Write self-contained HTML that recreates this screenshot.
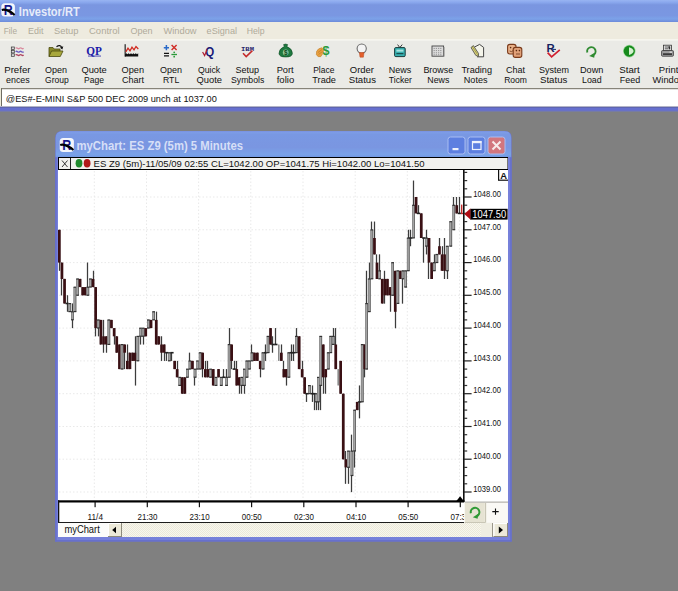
<!DOCTYPE html>
<html><head><meta charset="utf-8">
<style>
html,body{margin:0;padding:0;background:#808080;}
body{width:678px;height:591px;overflow:hidden;position:relative;font-family:"Liberation Sans",sans-serif;}
svg{position:absolute;left:0;top:0;display:block;font-family:"Liberation Sans",sans-serif;}
text{white-space:pre;}
</style></head><body>
<svg width="678" height="591" viewBox="0 0 678 591">
<defs>
<linearGradient id="tg" x1="0" y1="0" x2="0" y2="1">
<stop offset="0" stop-color="#98b4f2"/><stop offset="0.12" stop-color="#88a6ec"/><stop offset="0.22" stop-color="#7a96e0"/><stop offset="0.7" stop-color="#7a97e2"/><stop offset="0.86" stop-color="#7ca2e8"/><stop offset="1" stop-color="#6d8ada"/>
</linearGradient>
<linearGradient id="wg" x1="0" y1="0" x2="0" y2="1">
<stop offset="0" stop-color="#7f9ee8"/><stop offset="0.12" stop-color="#7998e3"/><stop offset="0.6" stop-color="#7a96e1"/><stop offset="0.86" stop-color="#7aa2e8"/><stop offset="1" stop-color="#7096e0"/>
</linearGradient>
<pattern id="trk" width="2" height="2" patternUnits="userSpaceOnUse"><rect width="2" height="2" fill="#f7f6ef"/><rect width="1" height="1" fill="#ece9d8"/><rect x="1" y="1" width="1" height="1" fill="#ece9d8"/></pattern>
<clipPath id="cpx"><rect x="58" y="502" width="406.5" height="21"/></clipPath>
</defs>
<rect width="678" height="591" fill="#808080"/>

<rect x="0" y="0" width="678" height="22" fill="url(#tg)"/>
<g id="appicon"><rect x="1.3" y="3.2" width="13.6" height="13.4" rx="3.5" fill="#f4f6fb"/><text x="3.8" y="14.6" font-size="14" font-weight="bold" fill="#16168c" textLength="9" lengthAdjust="spacingAndGlyphs">R</text><path d="M1.8 10 Q4.4 9.2 7.6 10.6 Q10.6 11.2 14.6 15" stroke="#000" stroke-width="2.2" fill="none"/></g>
<text x="18.8" y="15.6" font-size="12" fill="#e6ecfa" font-weight="bold" text-anchor="start" textLength="61.0" lengthAdjust="spacingAndGlyphs" >Investor/RT</text>
<rect x="0" y="22" width="678" height="18" fill="#eeebdf"/>
<text x="3.7" y="33.9" font-size="9.2" fill="#aeaa9a" font-weight="normal" text-anchor="start" textLength="13.3" lengthAdjust="spacingAndGlyphs" >File</text>
<text x="28.0" y="33.9" font-size="9.2" fill="#aeaa9a" font-weight="normal" text-anchor="start" textLength="15.4" lengthAdjust="spacingAndGlyphs" >Edit</text>
<text x="54.0" y="33.9" font-size="9.2" fill="#aeaa9a" font-weight="normal" text-anchor="start" textLength="24.5" lengthAdjust="spacingAndGlyphs" >Setup</text>
<text x="89.0" y="33.9" font-size="9.2" fill="#aeaa9a" font-weight="normal" text-anchor="start" textLength="30.6" lengthAdjust="spacingAndGlyphs" >Control</text>
<text x="130.4" y="33.9" font-size="9.2" fill="#aeaa9a" font-weight="normal" text-anchor="start" textLength="22.1" lengthAdjust="spacingAndGlyphs" >Open</text>
<text x="163.5" y="33.9" font-size="9.2" fill="#aeaa9a" font-weight="normal" text-anchor="start" textLength="33.1" lengthAdjust="spacingAndGlyphs" >Window</text>
<text x="206.6" y="33.9" font-size="9.2" fill="#aeaa9a" font-weight="normal" text-anchor="start" textLength="30.4" lengthAdjust="spacingAndGlyphs" >eSignal</text>
<text x="246.7" y="33.9" font-size="9.2" fill="#aeaa9a" font-weight="normal" text-anchor="start" textLength="17.8" lengthAdjust="spacingAndGlyphs" >Help</text>
<rect x="0" y="40" width="678" height="49" fill="#eaeae6"/>
<rect x="0" y="39.3" width="678" height="1.2" fill="#faf9f4"/>
<text x="4.2" y="72.6" font-size="9.3" fill="#111" font-weight="normal" text-anchor="start" textLength="26.3" lengthAdjust="spacingAndGlyphs" >Prefer</text>
<text x="6.0" y="83.0" font-size="9.3" fill="#111" font-weight="normal" text-anchor="start" textLength="23.7" lengthAdjust="spacingAndGlyphs" >ences</text>
<text x="45.0" y="72.6" font-size="9.3" fill="#111" font-weight="normal" text-anchor="start" textLength="22.0" lengthAdjust="spacingAndGlyphs" >Open</text>
<text x="45.0" y="83.0" font-size="9.3" fill="#111" font-weight="normal" text-anchor="start" textLength="23.7" lengthAdjust="spacingAndGlyphs" >Group</text>
<text x="81.4" y="72.6" font-size="9.3" fill="#111" font-weight="normal" text-anchor="start" textLength="25.4" lengthAdjust="spacingAndGlyphs" >Quote</text>
<text x="84.0" y="83.0" font-size="9.3" fill="#111" font-weight="normal" text-anchor="start" textLength="20.0" lengthAdjust="spacingAndGlyphs" >Page</text>
<text x="121.5" y="72.6" font-size="9.3" fill="#111" font-weight="normal" text-anchor="start" textLength="22.5" lengthAdjust="spacingAndGlyphs" >Open</text>
<text x="121.9" y="83.0" font-size="9.3" fill="#111" font-weight="normal" text-anchor="start" textLength="22.1" lengthAdjust="spacingAndGlyphs" >Chart</text>
<text x="160.0" y="72.6" font-size="9.3" fill="#111" font-weight="normal" text-anchor="start" textLength="22.0" lengthAdjust="spacingAndGlyphs" >Open</text>
<text x="163.0" y="83.0" font-size="9.3" fill="#111" font-weight="normal" text-anchor="start" textLength="16.2" lengthAdjust="spacingAndGlyphs" >RTL</text>
<text x="197.9" y="72.6" font-size="9.3" fill="#111" font-weight="normal" text-anchor="start" textLength="22.3" lengthAdjust="spacingAndGlyphs" >Quick</text>
<text x="196.5" y="83.0" font-size="9.3" fill="#111" font-weight="normal" text-anchor="start" textLength="25.5" lengthAdjust="spacingAndGlyphs" >Quote</text>
<text x="235.5" y="72.6" font-size="9.3" fill="#111" font-weight="normal" text-anchor="start" textLength="23.5" lengthAdjust="spacingAndGlyphs" >Setup</text>
<text x="231.0" y="83.0" font-size="9.3" fill="#111" font-weight="normal" text-anchor="start" textLength="33.3" lengthAdjust="spacingAndGlyphs" >Symbols</text>
<text x="276.7" y="72.6" font-size="9.3" fill="#111" font-weight="normal" text-anchor="start" textLength="17.0" lengthAdjust="spacingAndGlyphs" >Port</text>
<text x="276.7" y="83.0" font-size="9.3" fill="#111" font-weight="normal" text-anchor="start" textLength="17.5" lengthAdjust="spacingAndGlyphs" >folio</text>
<text x="313.2" y="72.6" font-size="9.3" fill="#111" font-weight="normal" text-anchor="start" textLength="21.2" lengthAdjust="spacingAndGlyphs" >Place</text>
<text x="312.3" y="83.0" font-size="9.3" fill="#111" font-weight="normal" text-anchor="start" textLength="23.7" lengthAdjust="spacingAndGlyphs" >Trade</text>
<text x="349.8" y="72.6" font-size="9.3" fill="#111" font-weight="normal" text-anchor="start" textLength="24.2" lengthAdjust="spacingAndGlyphs" >Order</text>
<text x="348.8" y="83.0" font-size="9.3" fill="#111" font-weight="normal" text-anchor="start" textLength="27.2" lengthAdjust="spacingAndGlyphs" >Status</text>
<text x="388.8" y="72.6" font-size="9.3" fill="#111" font-weight="normal" text-anchor="start" textLength="22.4" lengthAdjust="spacingAndGlyphs" >News</text>
<text x="388.8" y="83.0" font-size="9.3" fill="#111" font-weight="normal" text-anchor="start" textLength="23.2" lengthAdjust="spacingAndGlyphs" >Ticker</text>
<text x="423.4" y="72.6" font-size="9.3" fill="#111" font-weight="normal" text-anchor="start" textLength="29.9" lengthAdjust="spacingAndGlyphs" >Browse</text>
<text x="427.3" y="83.0" font-size="9.3" fill="#111" font-weight="normal" text-anchor="start" textLength="22.1" lengthAdjust="spacingAndGlyphs" >News</text>
<text x="461.4" y="72.6" font-size="9.3" fill="#111" font-weight="normal" text-anchor="start" textLength="30.6" lengthAdjust="spacingAndGlyphs" >Trading</text>
<text x="463.8" y="83.0" font-size="9.3" fill="#111" font-weight="normal" text-anchor="start" textLength="23.8" lengthAdjust="spacingAndGlyphs" >Notes</text>
<text x="505.9" y="72.6" font-size="9.3" fill="#111" font-weight="normal" text-anchor="start" textLength="19.0" lengthAdjust="spacingAndGlyphs" >Chat</text>
<text x="504.2" y="83.0" font-size="9.3" fill="#111" font-weight="normal" text-anchor="start" textLength="22.8" lengthAdjust="spacingAndGlyphs" >Room</text>
<text x="539.0" y="72.6" font-size="9.3" fill="#111" font-weight="normal" text-anchor="start" textLength="30.0" lengthAdjust="spacingAndGlyphs" >System</text>
<text x="540.0" y="83.0" font-size="9.3" fill="#111" font-weight="normal" text-anchor="start" textLength="27.3" lengthAdjust="spacingAndGlyphs" >Status</text>
<text x="580.0" y="72.6" font-size="9.3" fill="#111" font-weight="normal" text-anchor="start" textLength="23.4" lengthAdjust="spacingAndGlyphs" >Down</text>
<text x="582.0" y="83.0" font-size="9.3" fill="#111" font-weight="normal" text-anchor="start" textLength="19.7" lengthAdjust="spacingAndGlyphs" >Load</text>
<text x="619.3" y="72.6" font-size="9.3" fill="#111" font-weight="normal" text-anchor="start" textLength="20.4" lengthAdjust="spacingAndGlyphs" >Start</text>
<text x="619.8" y="83.0" font-size="9.3" fill="#111" font-weight="normal" text-anchor="start" textLength="20.4" lengthAdjust="spacingAndGlyphs" >Feed</text>
<text x="658.8" y="72.6" font-size="9.3" fill="#111" font-weight="normal" text-anchor="start" textLength="19.6" lengthAdjust="spacingAndGlyphs" >Print</text>
<text x="652.6" y="83.0" font-size="9.3" fill="#111" font-weight="normal" text-anchor="start" textLength="33.0" lengthAdjust="spacingAndGlyphs" >Window</text>
<rect x="11.3" y="47.0" width="3" height="2.5" fill="#d8d8d8" stroke="#333" stroke-width="0.7"/>
<path d="M15.6 48.3 q1 -0.9 2 0 t2 0 t2 0 t2 0" stroke="#d9889c" stroke-width="1.3" fill="none"/>
<rect x="11.3" y="50.400000000000006" width="3" height="2.5" fill="#d8d8d8" stroke="#333" stroke-width="0.7"/>
<path d="M15.6 51.7 q1 -0.9 2 0 t2 0 t2 0 t2 0" stroke="#6a5cc0" stroke-width="1.3" fill="none"/>
<rect x="11.3" y="53.800000000000004" width="3" height="2.5" fill="#d8d8d8" stroke="#333" stroke-width="0.7"/>
<path d="M15.6 55.1 q1 -0.9 2 0 t2 0 t2 0 t2 0" stroke="#b0405c" stroke-width="1.3" fill="none"/>
<path d="M49 56.5 V47.5 H53 L54.2 49 H60 V51" fill="#8a8a28" stroke="#4a4a10" stroke-width="0.8"/>
<path d="M49 56.5 L51.5 51 H63 L60.3 56.5 Z" fill="#a8a83c" stroke="#4a4a10" stroke-width="0.8"/>
<path d="M56.5 46.8 Q60 44 62 47.8" stroke="#111" stroke-width="1.1" fill="none"/><path d="M63.3 46.2 L62.4 49.6 L59.8 47.8 Z" fill="#111"/>
<text x="86.3" y="55.3" font-family="Liberation Serif" font-weight="bold" font-size="12.5" fill="#1c1ca8" textLength="15.6" lengthAdjust="spacingAndGlyphs">QP</text>
<rect x="88" y="55.6" width="13" height="0.9" fill="#3a3ab0"/>
<rect x="124.6" y="44.2" width="1.1" height="12.4" fill="#111"/>
<path d="M125 56.6 V54.2 l1.2 -1 l1.2 1 l1.2 -1 l1.2 1 l1.2 -1 l1.2 1 l1.2 -1 l1.2 1 l1.2 -1 l1.2 1 l1.2 -1 V56.6 Z" fill="#111"/>
<path d="M125.8 51.8 L128 48.2 L130 50.8 L132 47.2 L134 49.8 L136 46.5 L138.3 49" stroke="#d02a20" stroke-width="1.3" fill="none"/>
<path d="M163.8 47.7 H169 M166.4 45.1 V50.3" stroke="#2a6ac8" stroke-width="1.5"/>
<path d="M171.6 45 L176.6 50 M176.6 45 L171.6 50" stroke="#d0302a" stroke-width="1.5"/>
<path d="M164 53.3 H169 M164 55.9 H169" stroke="#111" stroke-width="1.3"/>
<path d="M171.4 54.5 H177" stroke="#2a9a3a" stroke-width="1.3"/><circle cx="174.2" cy="52.3" r="0.9" fill="#2a9a3a"/><circle cx="174.2" cy="56.7" r="0.9" fill="#2a9a3a"/>
<text x="205.3" y="55.6" font-family="Liberation Sans" font-weight="bold" font-size="12" fill="#1a1a78" textLength="9" lengthAdjust="spacingAndGlyphs">Q</text>
<path d="M202.6 52 L204.6 55.6 L207.2 49.5" stroke="#b02030" stroke-width="1.2" fill="none"/>
<text x="241" y="50.8" font-family="Liberation Mono" font-weight="bold" font-size="6.2" fill="#26266a" textLength="13" lengthAdjust="spacingAndGlyphs">IBM</text>
<path d="M243 53.2 L246.2 56.6 L252.4 50.6" stroke="#c42a2a" stroke-width="1.5" fill="none"/>
<path d="M283.6 44.6 Q285.6 43.6 287.6 44.6 L286.9 46.6 Q292.6 49 292.4 53.4 Q292.2 57 285.7 57 Q279.2 57 279 53.4 Q278.8 49 284.3 46.6 Z" fill="#1f7a40" stroke="#0e4a22" stroke-width="0.6"/>
<circle cx="285.7" cy="52.4" r="2.9" fill="#8fc89c"/><text x="284" y="54.9" font-size="6.5" font-weight="bold" fill="#0e4a22" font-family="Liberation Sans">$</text>
<path d="M316.6 51.5 Q318 48.2 321.6 47.8 L323.6 49.6 Q323.8 53.6 320.8 56.6 Q317.6 57.6 316.4 54.6 Z" fill="#e8a040" stroke="#c07820" stroke-width="0.6"/>
<path d="M318 52.5 L322 49.5 M318.6 54.4 L322.4 51.6" stroke="#b87020" stroke-width="0.6"/>
<text x="322.6" y="54.6" font-size="12.5" font-weight="bold" fill="#2a9a3a" font-family="Liberation Sans" textLength="7" lengthAdjust="spacingAndGlyphs">$</text>
<circle cx="361.7" cy="48.6" r="4.6" fill="#f4f4f4" stroke="#6a6a6a" stroke-width="1.1"/>
<path d="M359.4 52.6 H364 L363.4 57.2 H360 Z" fill="#e4602c" stroke="#b84820" stroke-width="0.5"/>
<path d="M397.6 44.6 L399.8 47.6 L402.2 44.6" stroke="#222" stroke-width="0.9" fill="none"/>
<rect x="394.6" y="47.6" width="10.6" height="9" rx="1.2" fill="#38b0b0" stroke="#1a3a3a" stroke-width="1"/>
<rect x="396.4" y="49.6" width="7" height="2" fill="#a8e4e0"/><rect x="396.4" y="53" width="7" height="1.2" fill="#1a5050"/>
<rect x="432" y="46" width="11.6" height="10.2" fill="#dcdcdc" stroke="#444" stroke-width="0.9"/>
<path d="M433.6 48.4 H442 M433.6 50.6 H442 M433.6 52.8 H442 M433.6 54.8 H442" stroke="#888" stroke-width="0.9" stroke-dasharray="1.2,1"/>
<rect x="443.6" y="47" width="1" height="9.6" fill="#999"/>
<path d="M474.6 47 L479.6 44.4 L483.6 47.4 V56.8 H477" fill="#f4f4ea" stroke="#333" stroke-width="0.9"/>
<path d="M471 47.6 L473.4 45.6 L478.6 53.6 L478.4 56.4 L475.8 55.4 Z" fill="#d8d080" stroke="#444" stroke-width="0.8"/>
<path d="M472.2 46.6 L477.8 54.8" stroke="#8a8a30" stroke-width="0.7"/>
<rect x="507.6" y="44.4" width="8.4" height="9.6" rx="2.2" fill="#e8b088" stroke="#7a3a1a" stroke-width="1.1"/>
<rect x="513.2" y="47.4" width="8.6" height="10" rx="2.2" fill="#e0a078" stroke="#7a3a1a" stroke-width="1.1"/>
<circle cx="510.6" cy="47.6" r="0.8" fill="#5a2a10"/><path d="M509.6 51 Q511.6 52.4 513.2 50.6" stroke="#5a2a10" stroke-width="0.7" fill="none"/>
<circle cx="516.4" cy="50.6" r="0.8" fill="#5a2a10"/><circle cx="519.4" cy="50.6" r="0.8" fill="#5a2a10"/><path d="M516 54 H520" stroke="#5a2a10" stroke-width="0.7"/>
<text x="546.4" y="52.4" font-family="Liberation Sans" font-weight="bold" font-size="10.5" fill="#141e60" textLength="8.2" lengthAdjust="spacingAndGlyphs">R</text>
<path d="M552.6 49.4 H556" stroke="#1a2a6a" stroke-width="1"/>
<path d="M547.6 52.6 L551.6 56.8 L559.8 49.8" stroke="#d02030" stroke-width="1.7" fill="none"/>
<path d="M587.3 52.4 A4.2 4.2 0 1 1 593 55.2" stroke="#2e8a30" stroke-width="1.9" fill="none"/><path d="M595 52.4 L594.2 57.8 L589.2 56 Z" fill="#2e8a30"/>
<circle cx="629.3" cy="51.1" r="6.3" fill="#9ad89a"/><circle cx="629.3" cy="51.1" r="5.6" fill="#168a1c"/>
<path d="M629 47.2 Q633.4 48.4 633.6 51.1 Q633.4 53.8 629 55 Z" fill="#d4f0d0"/>
<rect x="663.4" y="45.2" width="8" height="5.6" fill="#e8e8e8" stroke="#333" stroke-width="0.8"/>
<path d="M664.8 47 H670 M664.8 48.8 H668" stroke="#333" stroke-width="0.8"/><rect x="668.6" y="46.4" width="1.6" height="3" fill="#333"/>
<rect x="661.6" y="50.6" width="11.8" height="5.6" rx="0.8" fill="#a0a0a0" stroke="#333" stroke-width="0.8"/>
<rect x="663" y="53.4" width="9" height="1.4" fill="#222"/><rect x="669.6" y="51.6" width="2.4" height="1" fill="#eee"/>
<rect x="0" y="88" width="678" height="20" fill="#ece9d8"/>
<rect x="1.5" y="89" width="677" height="17.2" fill="#fff"/>
<rect x="1" y="88.2" width="677" height="1" fill="#6e6c62"/><rect x="1" y="88.2" width="1" height="18" fill="#6e6c62"/>
<rect x="0" y="106" width="678" height="1" fill="#e4e2d6"/>
<text x="5.8" y="101.9" font-size="9.2" fill="#111" font-weight="normal" text-anchor="start" textLength="211.0" lengthAdjust="spacingAndGlyphs" >@ES#-E-MINI S&amp;P 500 DEC 2009 unch at 1037.00</text>
<rect x="0" y="106.8" width="678" height="4.4" fill="#666fce"/>
<rect x="0" y="106.8" width="678" height="0.8" fill="#5a5f9c"/>
<rect x="0" y="110.8" width="678" height="0.9" fill="#777ca8"/>
<path d="M55.2 541.5 V138 Q55.2 131 62.2 131 H504.6 Q511.6 131 511.6 138 V541.5 Z" fill="#6c76d4"/>
<path d="M55.7 158 V138 Q55.7 131.3 62.7 131.3 H504.1 Q511.1 131.3 511.1 138 V158 Z" fill="url(#wg)"/>
<rect x="56.5" y="157" width="453.8" height="383" fill="#7680da"/>
<rect x="55.2" y="157" width="1.3" height="384.5" fill="#666fca"/><rect x="510.3" y="157" width="1.3" height="384.5" fill="#666fca"/><rect x="55.2" y="540.2" width="456.4" height="1.3" fill="#666fca"/>
<g><rect x="59.7" y="138" width="14.2" height="14" rx="3.5" fill="#f4f6fb"/><text x="62.2" y="149.8" font-size="14" font-weight="bold" fill="#16168c" textLength="9" lengthAdjust="spacingAndGlyphs">R</text><path d="M60.2 145 Q62.8 144.2 66 145.6 Q69 146.2 73.4 150" stroke="#000" stroke-width="2.2" fill="none"/></g>
<text x="76.5" y="150.3" font-size="12" fill="#d6dff7" font-weight="bold" text-anchor="start" textLength="166.5" lengthAdjust="spacingAndGlyphs" >myChart: ES Z9 (5m) 5 Minutes</text>
<rect x="448" y="137" width="17" height="17" rx="2.5" fill="#5d7fe0" stroke="#a9bdf2" stroke-width="1"/>
<rect x="468" y="137" width="17" height="17" rx="2.5" fill="#5d7fe0" stroke="#a9bdf2" stroke-width="1"/>
<rect x="488" y="137" width="17" height="17" rx="2.5" fill="#d2767e" stroke="#a9bdf2" stroke-width="1"/>
<rect x="452.5" y="148" width="6" height="2.2" fill="#eef2fc"/>
<rect x="472.5" y="141.5" width="8.5" height="8" fill="none" stroke="#eef2fc" stroke-width="1.2"/><rect x="472" y="141" width="9.5" height="2.2" fill="#eef2fc"/>
<path d="M492.5 141.5 L500.5 149.5 M500.5 141.5 L492.5 149.5" stroke="#f7eaea" stroke-width="2"/>
<rect x="58" y="157" width="450" height="13" fill="#000"/>
<rect x="59" y="158" width="448.5" height="11" fill="#f1f1ee"/>
<rect x="70" y="158" width="1" height="11" fill="#222"/>
<path d="M62 160.5 L67.5 167 M67.5 160.5 L62 167" stroke="#222" stroke-width="0.9"/>
<ellipse cx="79" cy="163.3" rx="3.4" ry="4.2" fill="#1f8a2c"/><ellipse cx="87.1" cy="163.3" rx="3.4" ry="4.2" fill="#b01a1a"/>
<text x="93.6" y="167.0" font-size="9.5" fill="#111" font-weight="normal" text-anchor="start" textLength="331.0" lengthAdjust="spacingAndGlyphs" >ES Z9 (5m)-11/05/09 02:55 CL=1042.00 OP=1041.75 Hi=1042.00 Lo=1041.50</text>
<rect x="58" y="170" width="450" height="367" fill="#fff"/>
<line x1="59" x2="463" y1="197.0" y2="197.0" stroke="#e9e9e9" stroke-width="1" stroke-dasharray="1.5,2"/>
<line x1="59" x2="463" y1="229.8" y2="229.8" stroke="#e9e9e9" stroke-width="1" stroke-dasharray="1.5,2"/>
<line x1="59" x2="463" y1="262.6" y2="262.6" stroke="#e9e9e9" stroke-width="1" stroke-dasharray="1.5,2"/>
<line x1="59" x2="463" y1="295.3" y2="295.3" stroke="#e9e9e9" stroke-width="1" stroke-dasharray="1.5,2"/>
<line x1="59" x2="463" y1="328.1" y2="328.1" stroke="#e9e9e9" stroke-width="1" stroke-dasharray="1.5,2"/>
<line x1="59" x2="463" y1="360.9" y2="360.9" stroke="#e9e9e9" stroke-width="1" stroke-dasharray="1.5,2"/>
<line x1="59" x2="463" y1="393.7" y2="393.7" stroke="#e9e9e9" stroke-width="1" stroke-dasharray="1.5,2"/>
<line x1="59" x2="463" y1="426.5" y2="426.5" stroke="#e9e9e9" stroke-width="1" stroke-dasharray="1.5,2"/>
<line x1="59" x2="463" y1="459.2" y2="459.2" stroke="#e9e9e9" stroke-width="1" stroke-dasharray="1.5,2"/>
<line x1="59" x2="463" y1="492.0" y2="492.0" stroke="#e9e9e9" stroke-width="1" stroke-dasharray="1.5,2"/>
<line y1="171" y2="500" x1="94.3" x2="94.3" stroke="#e9e9e9" stroke-width="1" stroke-dasharray="1.5,2"/>
<line y1="171" y2="500" x1="146.5" x2="146.5" stroke="#e9e9e9" stroke-width="1" stroke-dasharray="1.5,2"/>
<line y1="171" y2="500" x1="198.6" x2="198.6" stroke="#e9e9e9" stroke-width="1" stroke-dasharray="1.5,2"/>
<line y1="171" y2="500" x1="250.8" x2="250.8" stroke="#e9e9e9" stroke-width="1" stroke-dasharray="1.5,2"/>
<line y1="171" y2="500" x1="303.0" x2="303.0" stroke="#e9e9e9" stroke-width="1" stroke-dasharray="1.5,2"/>
<line y1="171" y2="500" x1="355.2" x2="355.2" stroke="#e9e9e9" stroke-width="1" stroke-dasharray="1.5,2"/>
<line y1="171" y2="500" x1="407.3" x2="407.3" stroke="#e9e9e9" stroke-width="1" stroke-dasharray="1.5,2"/>
<line y1="171" y2="500" x1="459.5" x2="459.5" stroke="#e9e9e9" stroke-width="1" stroke-dasharray="1.5,2"/>
<g id="bars">
<rect x="59" y="229.8" width="1" height="41.0" fill="#3c3c3c"/><rect x="58.5" y="229.8" width="2" height="41.0" fill="#3c3c3c" opacity="0.25"/>
<rect x="58.0" y="229.8" width="2.7" height="32.8" fill="#3a1014"/>
<rect x="61" y="262.6" width="1" height="32.8" fill="#3c3c3c"/><rect x="60.5" y="262.6" width="2" height="32.8" fill="#3c3c3c" opacity="0.25"/>
<rect x="60.6" y="262.6" width="2.7" height="16.4" fill="#3a1014"/>
<rect x="64" y="278.9" width="1" height="24.6" fill="#3c3c3c"/><rect x="63.5" y="278.9" width="2" height="24.6" fill="#3c3c3c" opacity="0.25"/>
<rect x="63.2" y="278.9" width="2.7" height="24.6" fill="#3a1014"/>
<rect x="67" y="295.3" width="1" height="16.4" fill="#3c3c3c"/><rect x="66.5" y="295.3" width="2" height="16.4" fill="#3c3c3c" opacity="0.25"/>
<rect x="65.5" y="302.7" width="3.2" height="1.6" fill="#222"/>
<rect x="69" y="303.5" width="1" height="8.2" fill="#3c3c3c"/><rect x="68.5" y="303.5" width="2" height="8.2" fill="#3c3c3c" opacity="0.25"/>
<rect x="68.4" y="303.5" width="2.7" height="8.2" fill="#a4a4a4"/><rect x="70.4" y="303.5" width="0.7" height="8.2" fill="#555"/><rect x="68.4" y="303.5" width="0.6" height="8.2" fill="#777"/>
<rect x="68.4" y="303.0" width="2.7" height="1.2" fill="#333"/>
<rect x="68.4" y="311.0" width="2.7" height="1.2" fill="#333"/>
<rect x="72" y="303.5" width="1" height="24.6" fill="#3c3c3c"/><rect x="71.5" y="303.5" width="2" height="24.6" fill="#3c3c3c" opacity="0.25"/>
<rect x="71.0" y="311.7" width="2.7" height="8.2" fill="#a4a4a4"/><rect x="73.0" y="311.7" width="0.7" height="8.2" fill="#555"/><rect x="71.0" y="311.7" width="0.6" height="8.2" fill="#777"/>
<rect x="71.0" y="311.2" width="2.7" height="1.2" fill="#333"/>
<rect x="71.0" y="319.2" width="2.7" height="1.2" fill="#333"/>
<rect x="74" y="287.1" width="1" height="24.6" fill="#3c3c3c"/><rect x="73.5" y="287.1" width="2" height="24.6" fill="#3c3c3c" opacity="0.25"/>
<rect x="73.6" y="287.1" width="2.7" height="24.6" fill="#a4a4a4"/><rect x="75.6" y="287.1" width="0.7" height="24.6" fill="#555"/><rect x="73.6" y="287.1" width="0.6" height="24.6" fill="#777"/>
<rect x="73.6" y="286.6" width="2.7" height="1.2" fill="#333"/>
<rect x="73.6" y="311.0" width="2.7" height="1.2" fill="#333"/>
<rect x="77" y="278.9" width="1" height="16.4" fill="#3c3c3c"/><rect x="76.5" y="278.9" width="2" height="16.4" fill="#3c3c3c" opacity="0.25"/>
<rect x="76.2" y="278.9" width="2.7" height="16.4" fill="#a4a4a4"/><rect x="78.2" y="278.9" width="0.7" height="16.4" fill="#555"/><rect x="76.2" y="278.9" width="0.6" height="16.4" fill="#777"/>
<rect x="76.2" y="278.4" width="2.7" height="1.2" fill="#333"/>
<rect x="76.2" y="294.6" width="2.7" height="1.2" fill="#333"/>
<rect x="80" y="278.9" width="1" height="8.2" fill="#3c3c3c"/><rect x="79.5" y="278.9" width="2" height="8.2" fill="#3c3c3c" opacity="0.25"/>
<rect x="78.7" y="278.9" width="2.7" height="8.2" fill="#3a1014"/>
<rect x="82" y="287.1" width="1" height="8.2" fill="#3c3c3c"/><rect x="81.5" y="287.1" width="2" height="8.2" fill="#3c3c3c" opacity="0.25"/>
<rect x="81.3" y="287.1" width="2.7" height="8.2" fill="#3a1014"/>
<rect x="85" y="287.1" width="1" height="8.2" fill="#3c3c3c"/><rect x="84.5" y="287.1" width="2" height="8.2" fill="#3c3c3c" opacity="0.25"/>
<rect x="83.9" y="287.1" width="2.7" height="8.2" fill="#3a1014"/>
<rect x="87" y="262.6" width="1" height="32.8" fill="#3c3c3c"/><rect x="86.5" y="262.6" width="2" height="32.8" fill="#3c3c3c" opacity="0.25"/>
<rect x="86.5" y="287.1" width="2.7" height="8.2" fill="#a4a4a4"/><rect x="88.5" y="287.1" width="0.7" height="8.2" fill="#555"/><rect x="86.5" y="287.1" width="0.6" height="8.2" fill="#777"/>
<rect x="86.5" y="286.6" width="2.7" height="1.2" fill="#333"/>
<rect x="86.5" y="294.6" width="2.7" height="1.2" fill="#333"/>
<rect x="90" y="278.9" width="1" height="8.2" fill="#3c3c3c"/><rect x="89.5" y="278.9" width="2" height="8.2" fill="#3c3c3c" opacity="0.25"/>
<rect x="89.1" y="278.9" width="2.7" height="8.2" fill="#a4a4a4"/><rect x="91.1" y="278.9" width="0.7" height="8.2" fill="#555"/><rect x="89.1" y="278.9" width="0.6" height="8.2" fill="#777"/>
<rect x="89.1" y="278.4" width="2.7" height="1.2" fill="#333"/>
<rect x="89.1" y="286.4" width="2.7" height="1.2" fill="#333"/>
<rect x="93" y="270.8" width="1" height="16.4" fill="#3c3c3c"/><rect x="92.5" y="270.8" width="2" height="16.4" fill="#3c3c3c" opacity="0.25"/>
<rect x="91.7" y="278.9" width="2.7" height="8.2" fill="#3a1014"/>
<rect x="95" y="287.1" width="1" height="49.2" fill="#3c3c3c"/><rect x="94.5" y="287.1" width="2" height="49.2" fill="#3c3c3c" opacity="0.25"/>
<rect x="94.3" y="287.1" width="2.7" height="41.0" fill="#3a1014"/>
<rect x="98" y="319.9" width="1" height="16.4" fill="#3c3c3c"/><rect x="97.5" y="319.9" width="2" height="16.4" fill="#3c3c3c" opacity="0.25"/>
<rect x="96.9" y="319.9" width="2.7" height="8.2" fill="#a4a4a4"/><rect x="98.9" y="319.9" width="0.7" height="8.2" fill="#555"/><rect x="96.9" y="319.9" width="0.6" height="8.2" fill="#777"/>
<rect x="96.9" y="319.4" width="2.7" height="1.2" fill="#333"/>
<rect x="96.9" y="327.4" width="2.7" height="1.2" fill="#333"/>
<rect x="100" y="319.9" width="1" height="24.6" fill="#3c3c3c"/><rect x="99.5" y="319.9" width="2" height="24.6" fill="#3c3c3c" opacity="0.25"/>
<rect x="99.6" y="319.9" width="2.7" height="24.6" fill="#3a1014"/>
<rect x="103" y="319.9" width="1" height="32.8" fill="#3c3c3c"/><rect x="102.5" y="319.9" width="2" height="32.8" fill="#3c3c3c" opacity="0.25"/>
<rect x="102.2" y="336.3" width="2.7" height="8.2" fill="#3a1014"/>
<rect x="106" y="336.3" width="1" height="16.4" fill="#3c3c3c"/><rect x="105.5" y="336.3" width="2" height="16.4" fill="#3c3c3c" opacity="0.25"/>
<rect x="104.9" y="336.3" width="2.7" height="8.2" fill="#3a1014"/>
<rect x="108" y="319.9" width="1" height="24.6" fill="#3c3c3c"/><rect x="107.5" y="319.9" width="2" height="24.6" fill="#3c3c3c" opacity="0.25"/>
<rect x="107.5" y="319.9" width="2.7" height="24.6" fill="#a4a4a4"/><rect x="109.5" y="319.9" width="0.7" height="24.6" fill="#555"/><rect x="107.5" y="319.9" width="0.6" height="24.6" fill="#777"/>
<rect x="107.5" y="319.4" width="2.7" height="1.2" fill="#333"/>
<rect x="107.5" y="343.8" width="2.7" height="1.2" fill="#333"/>
<rect x="111" y="319.9" width="1" height="8.2" fill="#3c3c3c"/><rect x="110.5" y="319.9" width="2" height="8.2" fill="#3c3c3c" opacity="0.25"/>
<rect x="110.1" y="319.9" width="2.7" height="8.2" fill="#3a1014"/>
<rect x="114" y="328.1" width="1" height="16.4" fill="#3c3c3c"/><rect x="113.5" y="328.1" width="2" height="16.4" fill="#3c3c3c" opacity="0.25"/>
<rect x="112.8" y="328.1" width="2.7" height="8.2" fill="#3a1014"/>
<rect x="116" y="336.3" width="1" height="16.4" fill="#3c3c3c"/><rect x="115.5" y="336.3" width="2" height="16.4" fill="#3c3c3c" opacity="0.25"/>
<rect x="115.4" y="336.3" width="2.7" height="16.4" fill="#3a1014"/>
<rect x="119" y="344.5" width="1" height="24.6" fill="#3c3c3c"/><rect x="118.5" y="344.5" width="2" height="24.6" fill="#3c3c3c" opacity="0.25"/>
<rect x="118.1" y="344.5" width="2.7" height="24.6" fill="#3a1014"/>
<rect x="122" y="344.5" width="1" height="24.6" fill="#3c3c3c"/><rect x="121.5" y="344.5" width="2" height="24.6" fill="#3c3c3c" opacity="0.25"/>
<rect x="120.7" y="344.5" width="2.7" height="24.6" fill="#a4a4a4"/><rect x="122.7" y="344.5" width="0.7" height="24.6" fill="#555"/><rect x="120.7" y="344.5" width="0.6" height="24.6" fill="#777"/>
<rect x="120.7" y="344.0" width="2.7" height="1.2" fill="#333"/>
<rect x="120.7" y="368.4" width="2.7" height="1.2" fill="#333"/>
<rect x="124" y="344.5" width="1" height="24.6" fill="#3c3c3c"/><rect x="123.5" y="344.5" width="2" height="24.6" fill="#3c3c3c" opacity="0.25"/>
<rect x="123.3" y="344.5" width="2.7" height="8.2" fill="#3a1014"/>
<rect x="127" y="344.5" width="1" height="24.6" fill="#3c3c3c"/><rect x="126.5" y="344.5" width="2" height="24.6" fill="#3c3c3c" opacity="0.25"/>
<rect x="126.0" y="360.9" width="2.7" height="8.2" fill="#3a1014"/>
<rect x="129" y="352.7" width="1" height="16.4" fill="#3c3c3c"/><rect x="128.5" y="352.7" width="2" height="16.4" fill="#3c3c3c" opacity="0.25"/>
<rect x="128.6" y="352.7" width="2.7" height="16.4" fill="#3a1014"/>
<rect x="132" y="352.7" width="1" height="8.2" fill="#3c3c3c"/><rect x="131.5" y="352.7" width="2" height="8.2" fill="#3c3c3c" opacity="0.25"/>
<rect x="131.3" y="352.7" width="2.7" height="8.2" fill="#3a1014"/>
<rect x="135" y="336.3" width="1" height="49.2" fill="#3c3c3c"/><rect x="134.5" y="336.3" width="2" height="49.2" fill="#3c3c3c" opacity="0.25"/>
<rect x="133.9" y="352.7" width="2.7" height="8.2" fill="#3a1014"/>
<rect x="137" y="336.3" width="1" height="24.6" fill="#3c3c3c"/><rect x="136.5" y="336.3" width="2" height="24.6" fill="#3c3c3c" opacity="0.25"/>
<rect x="136.5" y="336.3" width="2.7" height="24.6" fill="#a4a4a4"/><rect x="138.5" y="336.3" width="0.7" height="24.6" fill="#555"/><rect x="136.5" y="336.3" width="0.6" height="24.6" fill="#777"/>
<rect x="136.5" y="335.8" width="2.7" height="1.2" fill="#333"/>
<rect x="136.5" y="360.2" width="2.7" height="1.2" fill="#333"/>
<rect x="140" y="328.1" width="1" height="16.4" fill="#3c3c3c"/><rect x="139.5" y="328.1" width="2" height="16.4" fill="#3c3c3c" opacity="0.25"/>
<rect x="139.2" y="328.1" width="2.7" height="8.2" fill="#a4a4a4"/><rect x="141.2" y="328.1" width="0.7" height="8.2" fill="#555"/><rect x="139.2" y="328.1" width="0.6" height="8.2" fill="#777"/>
<rect x="139.2" y="327.6" width="2.7" height="1.2" fill="#333"/>
<rect x="139.2" y="335.6" width="2.7" height="1.2" fill="#333"/>
<rect x="143" y="328.1" width="1" height="16.4" fill="#3c3c3c"/><rect x="142.5" y="328.1" width="2" height="16.4" fill="#3c3c3c" opacity="0.25"/>
<rect x="141.8" y="328.1" width="2.7" height="8.2" fill="#a4a4a4"/><rect x="143.8" y="328.1" width="0.7" height="8.2" fill="#555"/><rect x="141.8" y="328.1" width="0.6" height="8.2" fill="#777"/>
<rect x="141.8" y="327.6" width="2.7" height="1.2" fill="#333"/>
<rect x="141.8" y="335.6" width="2.7" height="1.2" fill="#333"/>
<rect x="145" y="328.1" width="1" height="8.2" fill="#3c3c3c"/><rect x="144.5" y="328.1" width="2" height="8.2" fill="#3c3c3c" opacity="0.25"/>
<rect x="144.4" y="328.1" width="2.7" height="8.2" fill="#3a1014"/>
<rect x="148" y="319.9" width="1" height="8.2" fill="#3c3c3c"/><rect x="147.5" y="319.9" width="2" height="8.2" fill="#3c3c3c" opacity="0.25"/>
<rect x="147.0" y="319.9" width="2.7" height="8.2" fill="#a4a4a4"/><rect x="149.0" y="319.9" width="0.7" height="8.2" fill="#555"/><rect x="147.0" y="319.9" width="0.6" height="8.2" fill="#777"/>
<rect x="147.0" y="319.4" width="2.7" height="1.2" fill="#333"/>
<rect x="147.0" y="327.4" width="2.7" height="1.2" fill="#333"/>
<rect x="150" y="319.9" width="1" height="8.2" fill="#3c3c3c"/><rect x="149.5" y="319.9" width="2" height="8.2" fill="#3c3c3c" opacity="0.25"/>
<rect x="149.7" y="319.9" width="2.7" height="8.2" fill="#3a1014"/>
<rect x="153" y="311.7" width="1" height="8.2" fill="#3c3c3c"/><rect x="152.5" y="311.7" width="2" height="8.2" fill="#3c3c3c" opacity="0.25"/>
<rect x="152.3" y="311.7" width="2.7" height="8.2" fill="#a4a4a4"/><rect x="154.3" y="311.7" width="0.7" height="8.2" fill="#555"/><rect x="152.3" y="311.7" width="0.6" height="8.2" fill="#777"/>
<rect x="152.3" y="311.2" width="2.7" height="1.2" fill="#333"/>
<rect x="152.3" y="319.2" width="2.7" height="1.2" fill="#333"/>
<rect x="156" y="311.7" width="1" height="32.8" fill="#3c3c3c"/><rect x="155.5" y="311.7" width="2" height="32.8" fill="#3c3c3c" opacity="0.25"/>
<rect x="154.9" y="319.9" width="2.7" height="24.6" fill="#3a1014"/>
<rect x="158" y="336.3" width="1" height="8.2" fill="#3c3c3c"/><rect x="157.5" y="336.3" width="2" height="8.2" fill="#3c3c3c" opacity="0.25"/>
<rect x="157.5" y="336.3" width="2.7" height="8.2" fill="#3a1014"/>
<rect x="161" y="336.3" width="1" height="24.6" fill="#3c3c3c"/><rect x="160.5" y="336.3" width="2" height="24.6" fill="#3c3c3c" opacity="0.25"/>
<rect x="160.2" y="344.5" width="2.7" height="8.2" fill="#3a1014"/>
<rect x="164" y="344.5" width="1" height="16.4" fill="#3c3c3c"/><rect x="163.5" y="344.5" width="2" height="16.4" fill="#3c3c3c" opacity="0.25"/>
<rect x="162.8" y="344.5" width="2.7" height="8.2" fill="#3a1014"/>
<rect x="166" y="352.7" width="1" height="8.2" fill="#3c3c3c"/><rect x="165.5" y="352.7" width="2" height="8.2" fill="#3c3c3c" opacity="0.25"/>
<rect x="165.1" y="351.9" width="3.2" height="1.6" fill="#222"/>
<rect x="169" y="352.7" width="1" height="8.2" fill="#3c3c3c"/><rect x="168.5" y="352.7" width="2" height="8.2" fill="#3c3c3c" opacity="0.25"/>
<rect x="168.0" y="352.7" width="2.7" height="8.2" fill="#a4a4a4"/><rect x="170.0" y="352.7" width="0.7" height="8.2" fill="#555"/><rect x="168.0" y="352.7" width="0.6" height="8.2" fill="#777"/>
<rect x="168.0" y="352.2" width="2.7" height="1.2" fill="#333"/>
<rect x="168.0" y="360.2" width="2.7" height="1.2" fill="#333"/>
<rect x="171" y="352.7" width="1" height="8.2" fill="#3c3c3c"/><rect x="170.5" y="352.7" width="2" height="8.2" fill="#3c3c3c" opacity="0.25"/>
<rect x="170.4" y="351.9" width="3.2" height="1.6" fill="#222"/>
<rect x="174" y="360.9" width="1" height="8.2" fill="#3c3c3c"/><rect x="173.5" y="360.9" width="2" height="8.2" fill="#3c3c3c" opacity="0.25"/>
<rect x="173.3" y="360.9" width="2.7" height="8.2" fill="#3a1014"/>
<rect x="177" y="360.9" width="1" height="16.4" fill="#3c3c3c"/><rect x="176.5" y="360.9" width="2" height="16.4" fill="#3c3c3c" opacity="0.25"/>
<rect x="175.8" y="369.1" width="2.7" height="8.2" fill="#3a1014"/>
<rect x="179" y="377.3" width="1" height="8.2" fill="#3c3c3c"/><rect x="178.5" y="377.3" width="2" height="8.2" fill="#3c3c3c" opacity="0.25"/>
<rect x="178.4" y="377.3" width="2.7" height="8.2" fill="#a4a4a4"/><rect x="180.4" y="377.3" width="0.7" height="8.2" fill="#555"/><rect x="178.4" y="377.3" width="0.6" height="8.2" fill="#777"/>
<rect x="178.4" y="376.8" width="2.7" height="1.2" fill="#333"/>
<rect x="178.4" y="384.8" width="2.7" height="1.2" fill="#333"/>
<rect x="182" y="377.3" width="1" height="16.4" fill="#3c3c3c"/><rect x="181.5" y="377.3" width="2" height="16.4" fill="#3c3c3c" opacity="0.25"/>
<rect x="180.9" y="377.3" width="2.7" height="16.4" fill="#3a1014"/>
<rect x="184" y="377.3" width="1" height="16.4" fill="#3c3c3c"/><rect x="183.5" y="377.3" width="2" height="16.4" fill="#3c3c3c" opacity="0.25"/>
<rect x="183.5" y="377.3" width="2.7" height="16.4" fill="#3a1014"/>
<rect x="187" y="369.1" width="1" height="8.2" fill="#3c3c3c"/><rect x="186.5" y="369.1" width="2" height="8.2" fill="#3c3c3c" opacity="0.25"/>
<rect x="186.0" y="369.1" width="2.7" height="8.2" fill="#a4a4a4"/><rect x="188.0" y="369.1" width="0.7" height="8.2" fill="#555"/><rect x="186.0" y="369.1" width="0.6" height="8.2" fill="#777"/>
<rect x="186.0" y="368.6" width="2.7" height="1.2" fill="#333"/>
<rect x="186.0" y="376.6" width="2.7" height="1.2" fill="#333"/>
<rect x="189" y="352.7" width="1" height="16.4" fill="#3c3c3c"/><rect x="188.5" y="352.7" width="2" height="16.4" fill="#3c3c3c" opacity="0.25"/>
<rect x="188.6" y="360.9" width="2.7" height="8.2" fill="#a4a4a4"/><rect x="190.6" y="360.9" width="0.7" height="8.2" fill="#555"/><rect x="188.6" y="360.9" width="0.6" height="8.2" fill="#777"/>
<rect x="188.6" y="360.4" width="2.7" height="1.2" fill="#333"/>
<rect x="188.6" y="368.4" width="2.7" height="1.2" fill="#333"/>
<rect x="192" y="360.9" width="1" height="8.2" fill="#3c3c3c"/><rect x="191.5" y="360.9" width="2" height="8.2" fill="#3c3c3c" opacity="0.25"/>
<rect x="191.1" y="360.9" width="2.7" height="8.2" fill="#3a1014"/>
<rect x="194" y="369.1" width="1" height="16.4" fill="#3c3c3c"/><rect x="193.5" y="369.1" width="2" height="16.4" fill="#3c3c3c" opacity="0.25"/>
<rect x="193.7" y="369.1" width="2.7" height="8.2" fill="#a4a4a4"/><rect x="195.7" y="369.1" width="0.7" height="8.2" fill="#555"/><rect x="193.7" y="369.1" width="0.6" height="8.2" fill="#777"/>
<rect x="193.7" y="368.6" width="2.7" height="1.2" fill="#333"/>
<rect x="193.7" y="376.6" width="2.7" height="1.2" fill="#333"/>
<rect x="197" y="360.9" width="1" height="8.2" fill="#3c3c3c"/><rect x="196.5" y="360.9" width="2" height="8.2" fill="#3c3c3c" opacity="0.25"/>
<rect x="196.2" y="360.9" width="2.7" height="8.2" fill="#a4a4a4"/><rect x="198.2" y="360.9" width="0.7" height="8.2" fill="#555"/><rect x="196.2" y="360.9" width="0.6" height="8.2" fill="#777"/>
<rect x="196.2" y="360.4" width="2.7" height="1.2" fill="#333"/>
<rect x="196.2" y="368.4" width="2.7" height="1.2" fill="#333"/>
<rect x="200" y="352.7" width="1" height="16.4" fill="#3c3c3c"/><rect x="199.5" y="352.7" width="2" height="16.4" fill="#3c3c3c" opacity="0.25"/>
<rect x="198.8" y="352.7" width="2.7" height="16.4" fill="#a4a4a4"/><rect x="200.8" y="352.7" width="0.7" height="16.4" fill="#555"/><rect x="198.8" y="352.7" width="0.6" height="16.4" fill="#777"/>
<rect x="198.8" y="352.2" width="2.7" height="1.2" fill="#333"/>
<rect x="198.8" y="368.4" width="2.7" height="1.2" fill="#333"/>
<rect x="202" y="352.7" width="1" height="24.6" fill="#3c3c3c"/><rect x="201.5" y="352.7" width="2" height="24.6" fill="#3c3c3c" opacity="0.25"/>
<rect x="201.3" y="352.7" width="2.7" height="16.4" fill="#3a1014"/>
<rect x="205" y="360.9" width="1" height="16.4" fill="#3c3c3c"/><rect x="204.5" y="360.9" width="2" height="16.4" fill="#3c3c3c" opacity="0.25"/>
<rect x="204.0" y="369.1" width="2.7" height="8.2" fill="#3a1014"/>
<rect x="207" y="360.9" width="1" height="16.4" fill="#3c3c3c"/><rect x="206.5" y="360.9" width="2" height="16.4" fill="#3c3c3c" opacity="0.25"/>
<rect x="206.6" y="369.1" width="2.7" height="8.2" fill="#3a1014"/>
<rect x="210" y="369.1" width="1" height="8.2" fill="#3c3c3c"/><rect x="209.5" y="369.1" width="2" height="8.2" fill="#3c3c3c" opacity="0.25"/>
<rect x="209.2" y="369.1" width="2.7" height="8.2" fill="#a4a4a4"/><rect x="211.2" y="369.1" width="0.7" height="8.2" fill="#555"/><rect x="209.2" y="369.1" width="0.6" height="8.2" fill="#777"/>
<rect x="209.2" y="368.6" width="2.7" height="1.2" fill="#333"/>
<rect x="209.2" y="376.6" width="2.7" height="1.2" fill="#333"/>
<rect x="213" y="369.1" width="1" height="16.4" fill="#3c3c3c"/><rect x="212.5" y="369.1" width="2" height="16.4" fill="#3c3c3c" opacity="0.25"/>
<rect x="211.9" y="369.1" width="2.7" height="16.4" fill="#3a1014"/>
<rect x="215" y="377.3" width="1" height="8.2" fill="#3c3c3c"/><rect x="214.5" y="377.3" width="2" height="8.2" fill="#3c3c3c" opacity="0.25"/>
<rect x="214.6" y="377.3" width="2.7" height="8.2" fill="#a4a4a4"/><rect x="216.6" y="377.3" width="0.7" height="8.2" fill="#555"/><rect x="214.6" y="377.3" width="0.6" height="8.2" fill="#777"/>
<rect x="214.6" y="376.8" width="2.7" height="1.2" fill="#333"/>
<rect x="214.6" y="384.8" width="2.7" height="1.2" fill="#333"/>
<rect x="218" y="369.1" width="1" height="8.2" fill="#3c3c3c"/><rect x="217.5" y="369.1" width="2" height="8.2" fill="#3c3c3c" opacity="0.25"/>
<rect x="217.2" y="369.1" width="2.7" height="8.2" fill="#3a1014"/>
<rect x="221" y="377.3" width="1" height="8.2" fill="#3c3c3c"/><rect x="220.5" y="377.3" width="2" height="8.2" fill="#3c3c3c" opacity="0.25"/>
<rect x="219.9" y="377.3" width="2.7" height="8.2" fill="#a4a4a4"/><rect x="221.9" y="377.3" width="0.7" height="8.2" fill="#555"/><rect x="219.9" y="377.3" width="0.6" height="8.2" fill="#777"/>
<rect x="219.9" y="376.8" width="2.7" height="1.2" fill="#333"/>
<rect x="219.9" y="384.8" width="2.7" height="1.2" fill="#333"/>
<rect x="223" y="369.1" width="1" height="8.2" fill="#3c3c3c"/><rect x="222.5" y="369.1" width="2" height="8.2" fill="#3c3c3c" opacity="0.25"/>
<rect x="222.2" y="376.5" width="3.2" height="1.6" fill="#222"/>
<rect x="226" y="369.1" width="1" height="16.4" fill="#3c3c3c"/><rect x="225.5" y="369.1" width="2" height="16.4" fill="#3c3c3c" opacity="0.25"/>
<rect x="225.2" y="377.3" width="2.7" height="8.2" fill="#a4a4a4"/><rect x="227.2" y="377.3" width="0.7" height="8.2" fill="#555"/><rect x="225.2" y="377.3" width="0.6" height="8.2" fill="#777"/>
<rect x="225.2" y="376.8" width="2.7" height="1.2" fill="#333"/>
<rect x="225.2" y="384.8" width="2.7" height="1.2" fill="#333"/>
<rect x="229" y="328.1" width="1" height="49.2" fill="#3c3c3c"/><rect x="228.5" y="328.1" width="2" height="49.2" fill="#3c3c3c" opacity="0.25"/>
<rect x="227.8" y="344.5" width="2.7" height="32.8" fill="#a4a4a4"/><rect x="229.8" y="344.5" width="0.7" height="32.8" fill="#555"/><rect x="227.8" y="344.5" width="0.6" height="32.8" fill="#777"/>
<rect x="227.8" y="344.0" width="2.7" height="1.2" fill="#333"/>
<rect x="227.8" y="376.6" width="2.7" height="1.2" fill="#333"/>
<rect x="231" y="344.5" width="1" height="24.6" fill="#3c3c3c"/><rect x="230.5" y="344.5" width="2" height="24.6" fill="#3c3c3c" opacity="0.25"/>
<rect x="230.3" y="344.5" width="2.7" height="16.4" fill="#3a1014"/>
<rect x="234" y="360.9" width="1" height="8.2" fill="#3c3c3c"/><rect x="233.5" y="360.9" width="2" height="8.2" fill="#3c3c3c" opacity="0.25"/>
<rect x="232.6" y="368.3" width="3.2" height="1.6" fill="#222"/>
<rect x="236" y="360.9" width="1" height="24.6" fill="#3c3c3c"/><rect x="235.5" y="360.9" width="2" height="24.6" fill="#3c3c3c" opacity="0.25"/>
<rect x="235.4" y="369.1" width="2.7" height="16.4" fill="#3a1014"/>
<rect x="239" y="377.3" width="1" height="16.4" fill="#3c3c3c"/><rect x="238.5" y="377.3" width="2" height="16.4" fill="#3c3c3c" opacity="0.25"/>
<rect x="238.0" y="377.3" width="2.7" height="8.2" fill="#3a1014"/>
<rect x="241" y="377.3" width="1" height="16.4" fill="#3c3c3c"/><rect x="240.5" y="377.3" width="2" height="16.4" fill="#3c3c3c" opacity="0.25"/>
<rect x="240.5" y="377.3" width="2.7" height="8.2" fill="#a4a4a4"/><rect x="242.5" y="377.3" width="0.7" height="8.2" fill="#555"/><rect x="240.5" y="377.3" width="0.6" height="8.2" fill="#777"/>
<rect x="240.5" y="376.8" width="2.7" height="1.2" fill="#333"/>
<rect x="240.5" y="384.8" width="2.7" height="1.2" fill="#333"/>
<rect x="244" y="369.1" width="1" height="24.6" fill="#3c3c3c"/><rect x="243.5" y="369.1" width="2" height="24.6" fill="#3c3c3c" opacity="0.25"/>
<rect x="243.0" y="369.1" width="2.7" height="16.4" fill="#a4a4a4"/><rect x="245.0" y="369.1" width="0.7" height="16.4" fill="#555"/><rect x="243.0" y="369.1" width="0.6" height="16.4" fill="#777"/>
<rect x="243.0" y="368.6" width="2.7" height="1.2" fill="#333"/>
<rect x="243.0" y="384.8" width="2.7" height="1.2" fill="#333"/>
<rect x="246" y="360.9" width="1" height="16.4" fill="#3c3c3c"/><rect x="245.5" y="360.9" width="2" height="16.4" fill="#3c3c3c" opacity="0.25"/>
<rect x="245.6" y="360.9" width="2.7" height="16.4" fill="#a4a4a4"/><rect x="247.6" y="360.9" width="0.7" height="16.4" fill="#555"/><rect x="245.6" y="360.9" width="0.6" height="16.4" fill="#777"/>
<rect x="245.6" y="360.4" width="2.7" height="1.2" fill="#333"/>
<rect x="245.6" y="376.6" width="2.7" height="1.2" fill="#333"/>
<rect x="249" y="360.9" width="1" height="8.2" fill="#3c3c3c"/><rect x="248.5" y="360.9" width="2" height="8.2" fill="#3c3c3c" opacity="0.25"/>
<rect x="248.1" y="360.9" width="2.7" height="8.2" fill="#a4a4a4"/><rect x="250.1" y="360.9" width="0.7" height="8.2" fill="#555"/><rect x="248.1" y="360.9" width="0.6" height="8.2" fill="#777"/>
<rect x="248.1" y="360.4" width="2.7" height="1.2" fill="#333"/>
<rect x="248.1" y="368.4" width="2.7" height="1.2" fill="#333"/>
<rect x="251" y="344.5" width="1" height="16.4" fill="#3c3c3c"/><rect x="250.5" y="344.5" width="2" height="16.4" fill="#3c3c3c" opacity="0.25"/>
<rect x="250.7" y="352.7" width="2.7" height="8.2" fill="#a4a4a4"/><rect x="252.7" y="352.7" width="0.7" height="8.2" fill="#555"/><rect x="250.7" y="352.7" width="0.6" height="8.2" fill="#777"/>
<rect x="250.7" y="352.2" width="2.7" height="1.2" fill="#333"/>
<rect x="250.7" y="360.2" width="2.7" height="1.2" fill="#333"/>
<rect x="254" y="352.7" width="1" height="8.2" fill="#3c3c3c"/><rect x="253.5" y="352.7" width="2" height="8.2" fill="#3c3c3c" opacity="0.25"/>
<rect x="253.2" y="352.7" width="2.7" height="8.2" fill="#3a1014"/>
<rect x="257" y="352.7" width="1" height="8.2" fill="#3c3c3c"/><rect x="256.5" y="352.7" width="2" height="8.2" fill="#3c3c3c" opacity="0.25"/>
<rect x="256.0" y="352.7" width="2.7" height="8.2" fill="#3a1014"/>
<rect x="260" y="360.9" width="1" height="16.4" fill="#3c3c3c"/><rect x="259.5" y="360.9" width="2" height="16.4" fill="#3c3c3c" opacity="0.25"/>
<rect x="258.9" y="360.9" width="2.7" height="8.2" fill="#3a1014"/>
<rect x="262" y="352.7" width="1" height="16.4" fill="#3c3c3c"/><rect x="261.5" y="352.7" width="2" height="16.4" fill="#3c3c3c" opacity="0.25"/>
<rect x="261.7" y="352.7" width="2.7" height="16.4" fill="#a4a4a4"/><rect x="263.7" y="352.7" width="0.7" height="16.4" fill="#555"/><rect x="261.7" y="352.7" width="0.6" height="16.4" fill="#777"/>
<rect x="261.7" y="352.2" width="2.7" height="1.2" fill="#333"/>
<rect x="261.7" y="368.4" width="2.7" height="1.2" fill="#333"/>
<rect x="265" y="344.5" width="1" height="16.4" fill="#3c3c3c"/><rect x="264.5" y="344.5" width="2" height="16.4" fill="#3c3c3c" opacity="0.25"/>
<rect x="264.0" y="351.9" width="3.2" height="1.6" fill="#222"/>
<rect x="268" y="336.3" width="1" height="16.4" fill="#3c3c3c"/><rect x="267.5" y="336.3" width="2" height="16.4" fill="#3c3c3c" opacity="0.25"/>
<rect x="266.7" y="336.3" width="2.7" height="16.4" fill="#a4a4a4"/><rect x="268.7" y="336.3" width="0.7" height="16.4" fill="#555"/><rect x="266.7" y="336.3" width="0.6" height="16.4" fill="#777"/>
<rect x="266.7" y="335.8" width="2.7" height="1.2" fill="#333"/>
<rect x="266.7" y="352.0" width="2.7" height="1.2" fill="#333"/>
<rect x="270" y="328.1" width="1" height="16.4" fill="#3c3c3c"/><rect x="269.5" y="328.1" width="2" height="16.4" fill="#3c3c3c" opacity="0.25"/>
<rect x="269.2" y="328.1" width="2.7" height="16.4" fill="#3a1014"/>
<rect x="272" y="336.3" width="1" height="16.4" fill="#3c3c3c"/><rect x="271.5" y="336.3" width="2" height="16.4" fill="#3c3c3c" opacity="0.25"/>
<rect x="271.4" y="343.7" width="3.2" height="1.6" fill="#222"/>
<rect x="275" y="328.1" width="1" height="16.4" fill="#3c3c3c"/><rect x="274.5" y="328.1" width="2" height="16.4" fill="#3c3c3c" opacity="0.25"/>
<rect x="274.3" y="343.7" width="3.2" height="1.6" fill="#222"/>
<rect x="278.0" y="344.5" width="1.6" height="16.4" fill="#8a8a8a"/>
<rect x="281" y="344.5" width="1" height="16.4" fill="#3c3c3c"/><rect x="280.5" y="344.5" width="2" height="16.4" fill="#3c3c3c" opacity="0.25"/>
<rect x="280.0" y="352.7" width="2.7" height="8.2" fill="#3a1014"/>
<rect x="283" y="360.9" width="1" height="16.4" fill="#3c3c3c"/><rect x="282.5" y="360.9" width="2" height="16.4" fill="#3c3c3c" opacity="0.25"/>
<rect x="282.5" y="369.1" width="2.7" height="8.2" fill="#3a1014"/>
<rect x="286" y="369.1" width="1" height="16.4" fill="#3c3c3c"/><rect x="285.5" y="369.1" width="2" height="16.4" fill="#3c3c3c" opacity="0.25"/>
<rect x="285.0" y="369.1" width="2.7" height="8.2" fill="#3a1014"/>
<rect x="288" y="352.7" width="1" height="24.6" fill="#3c3c3c"/><rect x="287.5" y="352.7" width="2" height="24.6" fill="#3c3c3c" opacity="0.25"/>
<rect x="287.5" y="352.7" width="2.7" height="24.6" fill="#a4a4a4"/><rect x="289.5" y="352.7" width="0.7" height="24.6" fill="#555"/><rect x="287.5" y="352.7" width="0.6" height="24.6" fill="#777"/>
<rect x="287.5" y="352.2" width="2.7" height="1.2" fill="#333"/>
<rect x="287.5" y="376.6" width="2.7" height="1.2" fill="#333"/>
<rect x="291" y="344.5" width="1" height="16.4" fill="#3c3c3c"/><rect x="290.5" y="344.5" width="2" height="16.4" fill="#3c3c3c" opacity="0.25"/>
<rect x="289.7" y="351.9" width="3.2" height="1.6" fill="#222"/>
<rect x="293" y="344.5" width="1" height="16.4" fill="#3c3c3c"/><rect x="292.5" y="344.5" width="2" height="16.4" fill="#3c3c3c" opacity="0.25"/>
<rect x="292.2" y="351.9" width="3.2" height="1.6" fill="#222"/>
<rect x="296" y="328.1" width="1" height="24.6" fill="#3c3c3c"/><rect x="295.5" y="328.1" width="2" height="24.6" fill="#3c3c3c" opacity="0.25"/>
<rect x="295.0" y="336.3" width="2.7" height="16.4" fill="#a4a4a4"/><rect x="297.0" y="336.3" width="0.7" height="16.4" fill="#555"/><rect x="295.0" y="336.3" width="0.6" height="16.4" fill="#777"/>
<rect x="295.0" y="335.8" width="2.7" height="1.2" fill="#333"/>
<rect x="295.0" y="352.0" width="2.7" height="1.2" fill="#333"/>
<rect x="299" y="336.3" width="1" height="32.8" fill="#3c3c3c"/><rect x="298.5" y="336.3" width="2" height="32.8" fill="#3c3c3c" opacity="0.25"/>
<rect x="297.8" y="336.3" width="2.7" height="32.8" fill="#3a1014"/>
<rect x="302" y="360.9" width="1" height="16.4" fill="#3c3c3c"/><rect x="301.5" y="360.9" width="2" height="16.4" fill="#3c3c3c" opacity="0.25"/>
<rect x="300.8" y="369.1" width="2.7" height="8.2" fill="#3a1014"/>
<rect x="304" y="377.3" width="1" height="16.4" fill="#3c3c3c"/><rect x="303.5" y="377.3" width="2" height="16.4" fill="#3c3c3c" opacity="0.25"/>
<rect x="303.3" y="377.3" width="2.7" height="16.4" fill="#3a1014"/>
<rect x="306" y="393.7" width="1" height="8.2" fill="#3c3c3c"/><rect x="305.5" y="393.7" width="2" height="8.2" fill="#3c3c3c" opacity="0.25"/>
<rect x="305.3" y="392.9" width="3.2" height="1.6" fill="#222"/>
<rect x="309" y="385.5" width="1" height="8.2" fill="#3c3c3c"/><rect x="308.5" y="385.5" width="2" height="8.2" fill="#3c3c3c" opacity="0.25"/>
<rect x="308.0" y="385.5" width="2.7" height="8.2" fill="#a4a4a4"/><rect x="310.0" y="385.5" width="0.7" height="8.2" fill="#555"/><rect x="308.0" y="385.5" width="0.6" height="8.2" fill="#777"/>
<rect x="308.0" y="385.0" width="2.7" height="1.2" fill="#333"/>
<rect x="308.0" y="393.0" width="2.7" height="1.2" fill="#333"/>
<rect x="312" y="385.5" width="1" height="16.4" fill="#3c3c3c"/><rect x="311.5" y="385.5" width="2" height="16.4" fill="#3c3c3c" opacity="0.25"/>
<rect x="310.5" y="392.9" width="3.2" height="1.6" fill="#222"/>
<rect x="314" y="393.7" width="1" height="16.4" fill="#3c3c3c"/><rect x="313.5" y="393.7" width="2" height="16.4" fill="#3c3c3c" opacity="0.25"/>
<rect x="312.7" y="392.9" width="3.2" height="1.6" fill="#222"/>
<rect x="316" y="393.7" width="1" height="16.4" fill="#3c3c3c"/><rect x="315.5" y="393.7" width="2" height="16.4" fill="#3c3c3c" opacity="0.25"/>
<rect x="315.0" y="393.7" width="2.7" height="8.2" fill="#a4a4a4"/><rect x="317.0" y="393.7" width="0.7" height="8.2" fill="#555"/><rect x="315.0" y="393.7" width="0.6" height="8.2" fill="#777"/>
<rect x="315.0" y="393.2" width="2.7" height="1.2" fill="#333"/>
<rect x="315.0" y="401.2" width="2.7" height="1.2" fill="#333"/>
<rect x="318" y="377.3" width="1" height="32.8" fill="#3c3c3c"/><rect x="317.5" y="377.3" width="2" height="32.8" fill="#3c3c3c" opacity="0.25"/>
<rect x="317.0" y="377.3" width="2.7" height="24.6" fill="#a4a4a4"/><rect x="319.0" y="377.3" width="0.7" height="24.6" fill="#555"/><rect x="317.0" y="377.3" width="0.6" height="24.6" fill="#777"/>
<rect x="317.0" y="376.8" width="2.7" height="1.2" fill="#333"/>
<rect x="317.0" y="401.2" width="2.7" height="1.2" fill="#333"/>
<rect x="320" y="336.3" width="1" height="73.8" fill="#3c3c3c"/><rect x="319.5" y="336.3" width="2" height="73.8" fill="#3c3c3c" opacity="0.25"/>
<rect x="319.4" y="336.3" width="2.7" height="49.2" fill="#a4a4a4"/><rect x="321.4" y="336.3" width="0.7" height="49.2" fill="#555"/><rect x="319.4" y="336.3" width="0.6" height="49.2" fill="#777"/>
<rect x="319.4" y="335.8" width="2.7" height="1.2" fill="#333"/>
<rect x="319.4" y="384.8" width="2.7" height="1.2" fill="#333"/>
<rect x="323" y="344.5" width="1" height="49.2" fill="#3c3c3c"/><rect x="322.5" y="344.5" width="2" height="49.2" fill="#3c3c3c" opacity="0.25"/>
<rect x="321.9" y="344.5" width="2.7" height="32.8" fill="#3a1014"/>
<rect x="325" y="369.1" width="1" height="24.6" fill="#3c3c3c"/><rect x="324.5" y="369.1" width="2" height="24.6" fill="#3c3c3c" opacity="0.25"/>
<rect x="324.4" y="369.1" width="2.7" height="8.2" fill="#3a1014"/>
<rect x="328" y="352.7" width="1" height="16.4" fill="#3c3c3c"/><rect x="327.5" y="352.7" width="2" height="16.4" fill="#3c3c3c" opacity="0.25"/>
<rect x="326.9" y="352.7" width="2.7" height="16.4" fill="#a4a4a4"/><rect x="328.9" y="352.7" width="0.7" height="16.4" fill="#555"/><rect x="326.9" y="352.7" width="0.6" height="16.4" fill="#777"/>
<rect x="326.9" y="352.2" width="2.7" height="1.2" fill="#333"/>
<rect x="326.9" y="368.4" width="2.7" height="1.2" fill="#333"/>
<rect x="330" y="336.3" width="1" height="16.4" fill="#3c3c3c"/><rect x="329.5" y="336.3" width="2" height="16.4" fill="#3c3c3c" opacity="0.25"/>
<rect x="329.4" y="336.3" width="2.7" height="16.4" fill="#a4a4a4"/><rect x="331.4" y="336.3" width="0.7" height="16.4" fill="#555"/><rect x="329.4" y="336.3" width="0.6" height="16.4" fill="#777"/>
<rect x="329.4" y="335.8" width="2.7" height="1.2" fill="#333"/>
<rect x="329.4" y="352.0" width="2.7" height="1.2" fill="#333"/>
<rect x="333" y="328.1" width="1" height="16.4" fill="#3c3c3c"/><rect x="332.5" y="328.1" width="2" height="16.4" fill="#3c3c3c" opacity="0.25"/>
<rect x="331.9" y="336.3" width="2.7" height="8.2" fill="#a4a4a4"/><rect x="333.9" y="336.3" width="0.7" height="8.2" fill="#555"/><rect x="331.9" y="336.3" width="0.6" height="8.2" fill="#777"/>
<rect x="331.9" y="335.8" width="2.7" height="1.2" fill="#333"/>
<rect x="331.9" y="343.8" width="2.7" height="1.2" fill="#333"/>
<rect x="335" y="328.1" width="1" height="41.0" fill="#3c3c3c"/><rect x="334.5" y="328.1" width="2" height="41.0" fill="#3c3c3c" opacity="0.25"/>
<rect x="334.4" y="344.5" width="2.7" height="24.6" fill="#3a1014"/>
<rect x="337.4" y="369.1" width="1.6" height="16.4" fill="#8a8a8a"/>
<rect x="340" y="360.9" width="1" height="32.8" fill="#3c3c3c"/><rect x="339.5" y="360.9" width="2" height="32.8" fill="#3c3c3c" opacity="0.25"/>
<rect x="339.3" y="360.9" width="2.7" height="32.8" fill="#3a1014"/>
<rect x="343" y="393.7" width="1" height="65.6" fill="#3c3c3c"/><rect x="342.5" y="393.7" width="2" height="65.6" fill="#3c3c3c" opacity="0.25"/>
<rect x="341.9" y="393.7" width="2.7" height="65.6" fill="#3a1014"/>
<rect x="345" y="451.0" width="1" height="32.8" fill="#3c3c3c"/><rect x="344.5" y="451.0" width="2" height="32.8" fill="#3c3c3c" opacity="0.25"/>
<rect x="344.5" y="459.2" width="2.7" height="8.2" fill="#3a1014"/>
<rect x="348" y="451.0" width="1" height="32.8" fill="#3c3c3c"/><rect x="347.5" y="451.0" width="2" height="32.8" fill="#3c3c3c" opacity="0.25"/>
<rect x="347.1" y="451.0" width="2.7" height="16.4" fill="#a4a4a4"/><rect x="349.1" y="451.0" width="0.7" height="16.4" fill="#555"/><rect x="347.1" y="451.0" width="0.6" height="16.4" fill="#777"/>
<rect x="347.1" y="450.5" width="2.7" height="1.2" fill="#333"/>
<rect x="347.1" y="466.7" width="2.7" height="1.2" fill="#333"/>
<rect x="351" y="434.7" width="1" height="57.4" fill="#3c3c3c"/><rect x="350.5" y="434.7" width="2" height="57.4" fill="#3c3c3c" opacity="0.25"/>
<rect x="350.6" y="451.0" width="2.7" height="24.6" fill="#a4a4a4"/><rect x="352.6" y="451.0" width="0.7" height="24.6" fill="#555"/><rect x="350.6" y="451.0" width="0.6" height="24.6" fill="#777"/>
<rect x="350.6" y="450.5" width="2.7" height="1.2" fill="#333"/>
<rect x="350.6" y="474.9" width="2.7" height="1.2" fill="#333"/>
<rect x="354" y="410.1" width="1" height="57.4" fill="#3c3c3c"/><rect x="353.5" y="410.1" width="2" height="57.4" fill="#3c3c3c" opacity="0.25"/>
<rect x="353.3" y="410.1" width="2.7" height="41.0" fill="#a4a4a4"/><rect x="355.3" y="410.1" width="0.7" height="41.0" fill="#555"/><rect x="353.3" y="410.1" width="0.6" height="41.0" fill="#777"/>
<rect x="353.3" y="409.6" width="2.7" height="1.2" fill="#333"/>
<rect x="353.3" y="450.3" width="2.7" height="1.2" fill="#333"/>
<rect x="357" y="401.9" width="1" height="8.2" fill="#3c3c3c"/><rect x="356.5" y="401.9" width="2" height="8.2" fill="#3c3c3c" opacity="0.25"/>
<rect x="355.9" y="401.9" width="2.7" height="8.2" fill="#3a1014"/>
<rect x="359" y="385.5" width="1" height="32.8" fill="#3c3c3c"/><rect x="358.5" y="385.5" width="2" height="32.8" fill="#3c3c3c" opacity="0.25"/>
<rect x="358.1" y="401.1" width="3.2" height="1.6" fill="#222"/>
<rect x="362" y="344.5" width="1" height="57.4" fill="#3c3c3c"/><rect x="361.5" y="344.5" width="2" height="57.4" fill="#3c3c3c" opacity="0.25"/>
<rect x="360.9" y="344.5" width="2.7" height="57.4" fill="#a4a4a4"/><rect x="362.9" y="344.5" width="0.7" height="57.4" fill="#555"/><rect x="360.9" y="344.5" width="0.6" height="57.4" fill="#777"/>
<rect x="360.9" y="344.0" width="2.7" height="1.2" fill="#333"/>
<rect x="360.9" y="401.2" width="2.7" height="1.2" fill="#333"/>
<rect x="364" y="344.5" width="1" height="32.8" fill="#3c3c3c"/><rect x="363.5" y="344.5" width="2" height="32.8" fill="#3c3c3c" opacity="0.25"/>
<rect x="363.4" y="344.5" width="2.7" height="24.6" fill="#3a1014"/>
<rect x="366" y="270.8" width="1" height="98.3" fill="#3c3c3c"/><rect x="365.5" y="270.8" width="2" height="98.3" fill="#3c3c3c" opacity="0.25"/>
<rect x="365.3" y="303.5" width="2.7" height="65.6" fill="#a4a4a4"/><rect x="367.3" y="303.5" width="0.7" height="65.6" fill="#555"/><rect x="365.3" y="303.5" width="0.6" height="65.6" fill="#777"/>
<rect x="365.3" y="303.0" width="2.7" height="1.2" fill="#333"/>
<rect x="365.3" y="368.4" width="2.7" height="1.2" fill="#333"/>
<rect x="369" y="262.6" width="1" height="49.2" fill="#3c3c3c"/><rect x="368.5" y="262.6" width="2" height="49.2" fill="#3c3c3c" opacity="0.25"/>
<rect x="367.9" y="278.9" width="2.7" height="32.8" fill="#a4a4a4"/><rect x="369.9" y="278.9" width="0.7" height="32.8" fill="#555"/><rect x="367.9" y="278.9" width="0.6" height="32.8" fill="#777"/>
<rect x="367.9" y="278.4" width="2.7" height="1.2" fill="#333"/>
<rect x="367.9" y="311.0" width="2.7" height="1.2" fill="#333"/>
<rect x="371" y="221.6" width="1" height="57.4" fill="#3c3c3c"/><rect x="370.5" y="221.6" width="2" height="57.4" fill="#3c3c3c" opacity="0.25"/>
<rect x="370.5" y="229.8" width="2.7" height="49.2" fill="#a4a4a4"/><rect x="372.5" y="229.8" width="0.7" height="49.2" fill="#555"/><rect x="370.5" y="229.8" width="0.6" height="49.2" fill="#777"/>
<rect x="370.5" y="229.3" width="2.7" height="1.2" fill="#333"/>
<rect x="370.5" y="278.2" width="2.7" height="1.2" fill="#333"/>
<rect x="374" y="221.6" width="1" height="32.8" fill="#3c3c3c"/><rect x="373.5" y="221.6" width="2" height="32.8" fill="#3c3c3c" opacity="0.25"/>
<rect x="373.1" y="238.0" width="2.7" height="16.4" fill="#3a1014"/>
<rect x="376" y="254.4" width="1" height="24.6" fill="#3c3c3c"/><rect x="375.5" y="254.4" width="2" height="24.6" fill="#3c3c3c" opacity="0.25"/>
<rect x="375.7" y="262.6" width="2.7" height="16.4" fill="#3a1014"/>
<rect x="379" y="254.4" width="1" height="24.6" fill="#3c3c3c"/><rect x="378.5" y="254.4" width="2" height="24.6" fill="#3c3c3c" opacity="0.25"/>
<rect x="378.3" y="270.8" width="2.7" height="8.2" fill="#a4a4a4"/><rect x="380.3" y="270.8" width="0.7" height="8.2" fill="#555"/><rect x="378.3" y="270.8" width="0.6" height="8.2" fill="#777"/>
<rect x="378.3" y="270.3" width="2.7" height="1.2" fill="#333"/>
<rect x="378.3" y="278.2" width="2.7" height="1.2" fill="#333"/>
<rect x="382" y="278.9" width="1" height="24.6" fill="#3c3c3c"/><rect x="381.5" y="278.9" width="2" height="24.6" fill="#3c3c3c" opacity="0.25"/>
<rect x="380.9" y="278.9" width="2.7" height="24.6" fill="#3a1014"/>
<rect x="384" y="270.8" width="1" height="32.8" fill="#3c3c3c"/><rect x="383.5" y="270.8" width="2" height="32.8" fill="#3c3c3c" opacity="0.25"/>
<rect x="383.5" y="278.9" width="2.7" height="16.4" fill="#3a1014"/>
<rect x="387" y="278.9" width="1" height="16.4" fill="#3c3c3c"/><rect x="386.5" y="278.9" width="2" height="16.4" fill="#3c3c3c" opacity="0.25"/>
<rect x="386.1" y="278.9" width="2.7" height="16.4" fill="#3a1014"/>
<rect x="390" y="287.1" width="1" height="24.6" fill="#3c3c3c"/><rect x="389.5" y="287.1" width="2" height="24.6" fill="#3c3c3c" opacity="0.25"/>
<rect x="388.7" y="287.1" width="2.7" height="8.2" fill="#3a1014"/>
<rect x="392" y="262.6" width="1" height="32.8" fill="#3c3c3c"/><rect x="391.5" y="262.6" width="2" height="32.8" fill="#3c3c3c" opacity="0.25"/>
<rect x="391.3" y="262.6" width="2.7" height="32.8" fill="#a4a4a4"/><rect x="393.3" y="262.6" width="0.7" height="32.8" fill="#555"/><rect x="391.3" y="262.6" width="0.6" height="32.8" fill="#777"/>
<rect x="391.3" y="262.1" width="2.7" height="1.2" fill="#333"/>
<rect x="391.3" y="294.6" width="2.7" height="1.2" fill="#333"/>
<rect x="395" y="270.8" width="1" height="57.4" fill="#3c3c3c"/><rect x="394.5" y="270.8" width="2" height="57.4" fill="#3c3c3c" opacity="0.25"/>
<rect x="393.9" y="270.8" width="2.7" height="41.0" fill="#3a1014"/>
<rect x="397" y="270.8" width="1" height="32.8" fill="#3c3c3c"/><rect x="396.5" y="270.8" width="2" height="32.8" fill="#3c3c3c" opacity="0.25"/>
<rect x="396.5" y="270.8" width="2.7" height="32.8" fill="#a4a4a4"/><rect x="398.5" y="270.8" width="0.7" height="32.8" fill="#555"/><rect x="396.5" y="270.8" width="0.6" height="32.8" fill="#777"/>
<rect x="396.5" y="270.3" width="2.7" height="1.2" fill="#333"/>
<rect x="396.5" y="302.8" width="2.7" height="1.2" fill="#333"/>
<rect x="400" y="270.8" width="1" height="8.2" fill="#3c3c3c"/><rect x="399.5" y="270.8" width="2" height="8.2" fill="#3c3c3c" opacity="0.25"/>
<rect x="399.1" y="270.8" width="2.7" height="8.2" fill="#3a1014"/>
<rect x="402" y="270.8" width="1" height="32.8" fill="#3c3c3c"/><rect x="401.5" y="270.8" width="2" height="32.8" fill="#3c3c3c" opacity="0.25"/>
<rect x="401.7" y="270.8" width="2.7" height="8.2" fill="#a4a4a4"/><rect x="403.7" y="270.8" width="0.7" height="8.2" fill="#555"/><rect x="401.7" y="270.8" width="0.6" height="8.2" fill="#777"/>
<rect x="401.7" y="270.3" width="2.7" height="1.2" fill="#333"/>
<rect x="401.7" y="278.2" width="2.7" height="1.2" fill="#333"/>
<rect x="405" y="270.8" width="1" height="16.4" fill="#3c3c3c"/><rect x="404.5" y="270.8" width="2" height="16.4" fill="#3c3c3c" opacity="0.25"/>
<rect x="404.3" y="270.8" width="2.7" height="16.4" fill="#a4a4a4"/><rect x="406.3" y="270.8" width="0.7" height="16.4" fill="#555"/><rect x="404.3" y="270.8" width="0.6" height="16.4" fill="#777"/>
<rect x="404.3" y="270.3" width="2.7" height="1.2" fill="#333"/>
<rect x="404.3" y="286.4" width="2.7" height="1.2" fill="#333"/>
<rect x="408" y="229.8" width="1" height="41.0" fill="#3c3c3c"/><rect x="407.5" y="229.8" width="2" height="41.0" fill="#3c3c3c" opacity="0.25"/>
<rect x="406.9" y="238.0" width="2.7" height="32.8" fill="#a4a4a4"/><rect x="408.9" y="238.0" width="0.7" height="32.8" fill="#555"/><rect x="406.9" y="238.0" width="0.6" height="32.8" fill="#777"/>
<rect x="406.9" y="237.5" width="2.7" height="1.2" fill="#333"/>
<rect x="406.9" y="270.1" width="2.7" height="1.2" fill="#333"/>
<rect x="410" y="229.8" width="1" height="16.4" fill="#3c3c3c"/><rect x="409.5" y="229.8" width="2" height="16.4" fill="#3c3c3c" opacity="0.25"/>
<rect x="409.2" y="237.2" width="3.2" height="1.6" fill="#222"/>
<rect x="413" y="180.6" width="1" height="57.4" fill="#3c3c3c"/><rect x="412.5" y="180.6" width="2" height="57.4" fill="#3c3c3c" opacity="0.25"/>
<rect x="412.1" y="205.2" width="2.7" height="32.8" fill="#a4a4a4"/><rect x="414.1" y="205.2" width="0.7" height="32.8" fill="#555"/><rect x="412.1" y="205.2" width="0.6" height="32.8" fill="#777"/>
<rect x="412.1" y="204.7" width="2.7" height="1.2" fill="#333"/>
<rect x="412.1" y="237.3" width="2.7" height="1.2" fill="#333"/>
<rect x="416" y="197.0" width="1" height="16.4" fill="#3c3c3c"/><rect x="415.5" y="197.0" width="2" height="16.4" fill="#3c3c3c" opacity="0.25"/>
<rect x="414.7" y="197.0" width="2.7" height="16.4" fill="#3a1014"/>
<rect x="418" y="205.2" width="1" height="8.2" fill="#3c3c3c"/><rect x="417.5" y="205.2" width="2" height="8.2" fill="#3c3c3c" opacity="0.25"/>
<rect x="417.0" y="212.6" width="3.2" height="1.6" fill="#222"/>
<rect x="421" y="213.4" width="1" height="24.6" fill="#3c3c3c"/><rect x="420.5" y="213.4" width="2" height="24.6" fill="#3c3c3c" opacity="0.25"/>
<rect x="419.9" y="213.4" width="2.7" height="24.6" fill="#3a1014"/>
<rect x="423" y="238.0" width="1" height="24.6" fill="#3c3c3c"/><rect x="422.5" y="238.0" width="2" height="24.6" fill="#3c3c3c" opacity="0.25"/>
<rect x="422.2" y="237.2" width="3.2" height="1.6" fill="#222"/>
<rect x="426" y="229.8" width="1" height="24.6" fill="#3c3c3c"/><rect x="425.5" y="229.8" width="2" height="24.6" fill="#3c3c3c" opacity="0.25"/>
<rect x="425.1" y="238.0" width="2.7" height="8.2" fill="#a4a4a4"/><rect x="427.1" y="238.0" width="0.7" height="8.2" fill="#555"/><rect x="425.1" y="238.0" width="0.6" height="8.2" fill="#777"/>
<rect x="425.1" y="237.5" width="2.7" height="1.2" fill="#333"/>
<rect x="425.1" y="245.5" width="2.7" height="1.2" fill="#333"/>
<rect x="428" y="238.0" width="1" height="41.0" fill="#3c3c3c"/><rect x="427.5" y="238.0" width="2" height="41.0" fill="#3c3c3c" opacity="0.25"/>
<rect x="427.7" y="238.0" width="2.7" height="24.6" fill="#3a1014"/>
<rect x="431" y="262.6" width="1" height="16.4" fill="#3c3c3c"/><rect x="430.5" y="262.6" width="2" height="16.4" fill="#3c3c3c" opacity="0.25"/>
<rect x="430.3" y="262.6" width="2.7" height="16.4" fill="#3a1014"/>
<rect x="434" y="254.4" width="1" height="16.4" fill="#3c3c3c"/><rect x="433.5" y="254.4" width="2" height="16.4" fill="#3c3c3c" opacity="0.25"/>
<rect x="432.9" y="262.6" width="2.7" height="8.2" fill="#a4a4a4"/><rect x="434.9" y="262.6" width="0.7" height="8.2" fill="#555"/><rect x="432.9" y="262.6" width="0.6" height="8.2" fill="#777"/>
<rect x="432.9" y="262.1" width="2.7" height="1.2" fill="#333"/>
<rect x="432.9" y="270.1" width="2.7" height="1.2" fill="#333"/>
<rect x="436" y="254.4" width="1" height="8.2" fill="#3c3c3c"/><rect x="435.5" y="254.4" width="2" height="8.2" fill="#3c3c3c" opacity="0.25"/>
<rect x="435.5" y="254.4" width="2.7" height="8.2" fill="#a4a4a4"/><rect x="437.5" y="254.4" width="0.7" height="8.2" fill="#555"/><rect x="435.5" y="254.4" width="0.6" height="8.2" fill="#777"/>
<rect x="435.5" y="253.9" width="2.7" height="1.2" fill="#333"/>
<rect x="435.5" y="261.9" width="2.7" height="1.2" fill="#333"/>
<rect x="439" y="238.0" width="1" height="16.4" fill="#3c3c3c"/><rect x="438.5" y="238.0" width="2" height="16.4" fill="#3c3c3c" opacity="0.25"/>
<rect x="438.1" y="246.2" width="2.7" height="8.2" fill="#3a1014"/>
<rect x="442" y="246.2" width="1" height="24.6" fill="#3c3c3c"/><rect x="441.5" y="246.2" width="2" height="24.6" fill="#3c3c3c" opacity="0.25"/>
<rect x="440.7" y="254.4" width="2.7" height="16.4" fill="#3a1014"/>
<rect x="444" y="238.0" width="1" height="41.0" fill="#3c3c3c"/><rect x="443.5" y="238.0" width="2" height="41.0" fill="#3c3c3c" opacity="0.25"/>
<rect x="443.3" y="254.4" width="2.7" height="16.4" fill="#3a1014"/>
<rect x="447" y="246.2" width="1" height="32.8" fill="#3c3c3c"/><rect x="446.5" y="246.2" width="2" height="32.8" fill="#3c3c3c" opacity="0.25"/>
<rect x="445.9" y="246.2" width="2.7" height="24.6" fill="#a4a4a4"/><rect x="447.9" y="246.2" width="0.7" height="24.6" fill="#555"/><rect x="445.9" y="246.2" width="0.6" height="24.6" fill="#777"/>
<rect x="445.9" y="245.7" width="2.7" height="1.2" fill="#333"/>
<rect x="445.9" y="270.1" width="2.7" height="1.2" fill="#333"/>
<rect x="450" y="221.6" width="1" height="24.6" fill="#3c3c3c"/><rect x="449.5" y="221.6" width="2" height="24.6" fill="#3c3c3c" opacity="0.25"/>
<rect x="449.4" y="221.6" width="2.7" height="24.6" fill="#a4a4a4"/><rect x="451.4" y="221.6" width="0.7" height="24.6" fill="#555"/><rect x="449.4" y="221.6" width="0.6" height="24.6" fill="#777"/>
<rect x="449.4" y="221.1" width="2.7" height="1.2" fill="#333"/>
<rect x="449.4" y="245.5" width="2.7" height="1.2" fill="#333"/>
<rect x="453" y="197.0" width="1" height="32.8" fill="#3c3c3c"/><rect x="452.5" y="197.0" width="2" height="32.8" fill="#3c3c3c" opacity="0.25"/>
<rect x="452.4" y="205.2" width="2.7" height="24.6" fill="#a4a4a4"/><rect x="454.4" y="205.2" width="0.7" height="24.6" fill="#555"/><rect x="452.4" y="205.2" width="0.6" height="24.6" fill="#777"/>
<rect x="452.4" y="204.7" width="2.7" height="1.2" fill="#333"/>
<rect x="452.4" y="229.1" width="2.7" height="1.2" fill="#333"/>
<rect x="456" y="197.0" width="1" height="16.4" fill="#3c3c3c"/><rect x="455.5" y="197.0" width="2" height="16.4" fill="#3c3c3c" opacity="0.25"/>
<rect x="455.4" y="205.2" width="2.7" height="8.2" fill="#3a1014"/>
<rect x="459" y="197.0" width="1" height="16.4" fill="#3c3c3c"/><rect x="458.5" y="197.0" width="2" height="16.4" fill="#3c3c3c" opacity="0.25"/>
<rect x="457.7" y="212.6" width="3.2" height="1.6" fill="#222"/>
<rect x="461" y="204.6" width="1.4" height="9.4" fill="#c42c2c"/><rect x="461" y="212.8" width="2.4" height="1.4" fill="#c42c2c"/>
</g>
<rect x="463" y="170" width="1.6" height="332" fill="#111"/>
<rect x="464" y="171.8" width="3.2" height="1.2" fill="#333"/>
<rect x="464" y="180.0" width="3.2" height="1.2" fill="#333"/>
<rect x="464" y="188.2" width="3.2" height="1.2" fill="#333"/>
<rect x="464" y="196.4" width="7.6" height="1.2" fill="#222"/>
<text x="473.3" y="196.7" font-size="9" fill="#111" font-weight="normal" text-anchor="start" textLength="27.6" lengthAdjust="spacingAndGlyphs" >1048.00</text>
<rect x="464" y="204.6" width="3.2" height="1.2" fill="#333"/>
<rect x="464" y="212.8" width="3.2" height="1.2" fill="#333"/>
<rect x="464" y="221.0" width="3.2" height="1.2" fill="#333"/>
<rect x="464" y="229.2" width="7.6" height="1.2" fill="#222"/>
<text x="473.3" y="229.5" font-size="9" fill="#111" font-weight="normal" text-anchor="start" textLength="27.6" lengthAdjust="spacingAndGlyphs" >1047.00</text>
<rect x="464" y="237.4" width="3.2" height="1.2" fill="#333"/>
<rect x="464" y="245.6" width="3.2" height="1.2" fill="#333"/>
<rect x="464" y="253.8" width="3.2" height="1.2" fill="#333"/>
<rect x="464" y="262.0" width="7.6" height="1.2" fill="#222"/>
<text x="473.3" y="262.3" font-size="9" fill="#111" font-weight="normal" text-anchor="start" textLength="27.6" lengthAdjust="spacingAndGlyphs" >1046.00</text>
<rect x="464" y="270.2" width="3.2" height="1.2" fill="#333"/>
<rect x="464" y="278.3" width="3.2" height="1.2" fill="#333"/>
<rect x="464" y="286.5" width="3.2" height="1.2" fill="#333"/>
<rect x="464" y="294.7" width="7.6" height="1.2" fill="#222"/>
<text x="473.3" y="295.0" font-size="9" fill="#111" font-weight="normal" text-anchor="start" textLength="27.6" lengthAdjust="spacingAndGlyphs" >1045.00</text>
<rect x="464" y="302.9" width="3.2" height="1.2" fill="#333"/>
<rect x="464" y="311.1" width="3.2" height="1.2" fill="#333"/>
<rect x="464" y="319.3" width="3.2" height="1.2" fill="#333"/>
<rect x="464" y="327.5" width="7.6" height="1.2" fill="#222"/>
<text x="473.3" y="327.8" font-size="9" fill="#111" font-weight="normal" text-anchor="start" textLength="27.6" lengthAdjust="spacingAndGlyphs" >1044.00</text>
<rect x="464" y="335.7" width="3.2" height="1.2" fill="#333"/>
<rect x="464" y="343.9" width="3.2" height="1.2" fill="#333"/>
<rect x="464" y="352.1" width="3.2" height="1.2" fill="#333"/>
<rect x="464" y="360.3" width="7.6" height="1.2" fill="#222"/>
<text x="473.3" y="360.6" font-size="9" fill="#111" font-weight="normal" text-anchor="start" textLength="27.6" lengthAdjust="spacingAndGlyphs" >1043.00</text>
<rect x="464" y="368.5" width="3.2" height="1.2" fill="#333"/>
<rect x="464" y="376.7" width="3.2" height="1.2" fill="#333"/>
<rect x="464" y="384.9" width="3.2" height="1.2" fill="#333"/>
<rect x="464" y="393.1" width="7.6" height="1.2" fill="#222"/>
<text x="473.3" y="393.4" font-size="9" fill="#111" font-weight="normal" text-anchor="start" textLength="27.6" lengthAdjust="spacingAndGlyphs" >1042.00</text>
<rect x="464" y="401.3" width="3.2" height="1.2" fill="#333"/>
<rect x="464" y="409.5" width="3.2" height="1.2" fill="#333"/>
<rect x="464" y="417.7" width="3.2" height="1.2" fill="#333"/>
<rect x="464" y="425.9" width="7.6" height="1.2" fill="#222"/>
<text x="473.3" y="426.2" font-size="9" fill="#111" font-weight="normal" text-anchor="start" textLength="27.6" lengthAdjust="spacingAndGlyphs" >1041.00</text>
<rect x="464" y="434.1" width="3.2" height="1.2" fill="#333"/>
<rect x="464" y="442.2" width="3.2" height="1.2" fill="#333"/>
<rect x="464" y="450.4" width="3.2" height="1.2" fill="#333"/>
<rect x="464" y="458.6" width="7.6" height="1.2" fill="#222"/>
<text x="473.3" y="458.9" font-size="9" fill="#111" font-weight="normal" text-anchor="start" textLength="27.6" lengthAdjust="spacingAndGlyphs" >1040.00</text>
<rect x="464" y="466.8" width="3.2" height="1.2" fill="#333"/>
<rect x="464" y="475.0" width="3.2" height="1.2" fill="#333"/>
<rect x="464" y="483.2" width="3.2" height="1.2" fill="#333"/>
<rect x="464" y="491.4" width="7.6" height="1.2" fill="#222"/>
<text x="473.3" y="491.7" font-size="9" fill="#111" font-weight="normal" text-anchor="start" textLength="27.6" lengthAdjust="spacingAndGlyphs" >1039.00</text>
<rect x="470.2" y="208.8" width="37.4" height="10.8" fill="#000"/>
<path d="M464.3 214 L470.4 208.6 V219.6 Z" fill="#b00c14"/>
<text x="472.3" y="218.0" font-size="10.5" fill="#fff" font-weight="normal" text-anchor="start" textLength="33.8" lengthAdjust="spacingAndGlyphs" >1047.50</text>
<rect x="498" y="170" width="10" height="10.8" fill="#111"/><rect x="499.2" y="170" width="8.8" height="9.6" fill="#fff"/>
<text x="500.3" y="178.6" font-size="9.5" fill="#111" font-weight="bold" text-anchor="start" textLength="6.8" lengthAdjust="spacingAndGlyphs" >A</text>
<rect x="58" y="500.3" width="406.5" height="2.2" fill="#000"/>
<rect x="58" y="500.3" width="1.3" height="22.7" fill="#111"/>
<g clip-path="url(#cpx)">
<rect x="94.5" y="502" width="1.2" height="5.2" fill="#111"/>
<text x="87.5" y="519.7" font-size="9" fill="#111" font-weight="normal" text-anchor="start" textLength="15.5" lengthAdjust="spacingAndGlyphs" >11/4</text>
<rect x="146.7" y="502" width="1.2" height="5.2" fill="#111"/>
<text x="137.5" y="519.7" font-size="9" fill="#111" font-weight="normal" text-anchor="start" textLength="20.0" lengthAdjust="spacingAndGlyphs" >21:30</text>
<rect x="198.8" y="502" width="1.2" height="5.2" fill="#111"/>
<text x="189.6" y="519.7" font-size="9" fill="#111" font-weight="normal" text-anchor="start" textLength="20.0" lengthAdjust="spacingAndGlyphs" >23:10</text>
<rect x="251.0" y="502" width="1.2" height="5.2" fill="#111"/>
<text x="241.8" y="519.7" font-size="9" fill="#111" font-weight="normal" text-anchor="start" textLength="20.0" lengthAdjust="spacingAndGlyphs" >00:50</text>
<rect x="303.2" y="502" width="1.2" height="5.2" fill="#111"/>
<text x="294.0" y="519.7" font-size="9" fill="#111" font-weight="normal" text-anchor="start" textLength="20.0" lengthAdjust="spacingAndGlyphs" >02:30</text>
<rect x="355.4" y="502" width="1.2" height="5.2" fill="#111"/>
<text x="346.2" y="519.7" font-size="9" fill="#111" font-weight="normal" text-anchor="start" textLength="20.0" lengthAdjust="spacingAndGlyphs" >04:10</text>
<rect x="407.5" y="502" width="1.2" height="5.2" fill="#111"/>
<text x="398.3" y="519.7" font-size="9" fill="#111" font-weight="normal" text-anchor="start" textLength="20.0" lengthAdjust="spacingAndGlyphs" >05:50</text>
<rect x="459.7" y="502" width="1.2" height="5.2" fill="#111"/>
<text x="450.5" y="519.7" font-size="9" fill="#111" font-weight="normal" text-anchor="start" textLength="20.0" lengthAdjust="spacingAndGlyphs" >07:30</text>
</g>
<path d="M456.4 501 L460.1 496.3 L463.8 501 Z" fill="#000"/>
<rect x="58" y="522" width="406.5" height="1.1" fill="#1c1c1c"/>
<rect x="464.6" y="502.5" width="43.4" height="20.5" fill="#f3f2ea"/>
<rect x="464.6" y="502.5" width="20.6" height="20" fill="#e6e3d3" stroke="#fbfaf5" stroke-width="0.8"/>
<rect x="485" y="503" width="1" height="19.5" fill="#c9c6b6"/><rect x="465" y="522" width="20.5" height="1" fill="#c9c6b6"/>
<path d="M470.9 513.3 A4.3 4.3 0 1 1 476.6 516.2" stroke="#2f9a35" stroke-width="2" fill="none"/><path d="M478.4 513.8 L477.6 518.8 L472.8 517.3 Z" fill="#2f9a35"/>
<rect x="487" y="503" width="20.6" height="19.6" fill="#faf9f5"/>
<path d="M492.3 511.6 H498.7 M495.5 508.4 V514.8" stroke="#111" stroke-width="1.1"/>
<rect x="464.6" y="501.6" width="43.4" height="1" fill="#a4a39c"/>
<rect x="58" y="523" width="450" height="14" fill="#fcfcfa"/>
<text x="64.4" y="533.2" font-size="10" fill="#111" font-weight="normal" text-anchor="start" textLength="35.4" lengthAdjust="spacingAndGlyphs" >myChart</text>
<rect x="122" y="523" width="371" height="14" fill="url(#trk)"/>
<rect x="108" y="523" width="14" height="14" fill="#ece9d8"/><rect x="108" y="523" width="14" height="1" fill="#fff"/><rect x="108" y="523" width="1" height="14" fill="#fff"/><rect x="121" y="523" width="1" height="14" fill="#8d8a7c"/><rect x="108" y="536" width="14" height="1" fill="#8d8a7c"/>
<path d="M116 526.8 V533.2 L112.2 530 Z" fill="#000"/>
<rect x="481" y="523" width="11.5" height="14" fill="#efede2"/><rect x="492" y="523" width="1" height="14" fill="#9a978a"/>
<rect x="493.5" y="523" width="14.5" height="14" fill="#ece9d8"/><rect x="493.5" y="523" width="14.5" height="1" fill="#fff"/><rect x="493.5" y="523" width="1" height="14" fill="#fff"/><rect x="507" y="523" width="1" height="14" fill="#8d8a7c"/><rect x="493.5" y="536" width="14.5" height="1" fill="#8d8a7c"/>
<path d="M498.8 526.5 V533.5 L503 530 Z" fill="#000"/>
</svg></body></html>
